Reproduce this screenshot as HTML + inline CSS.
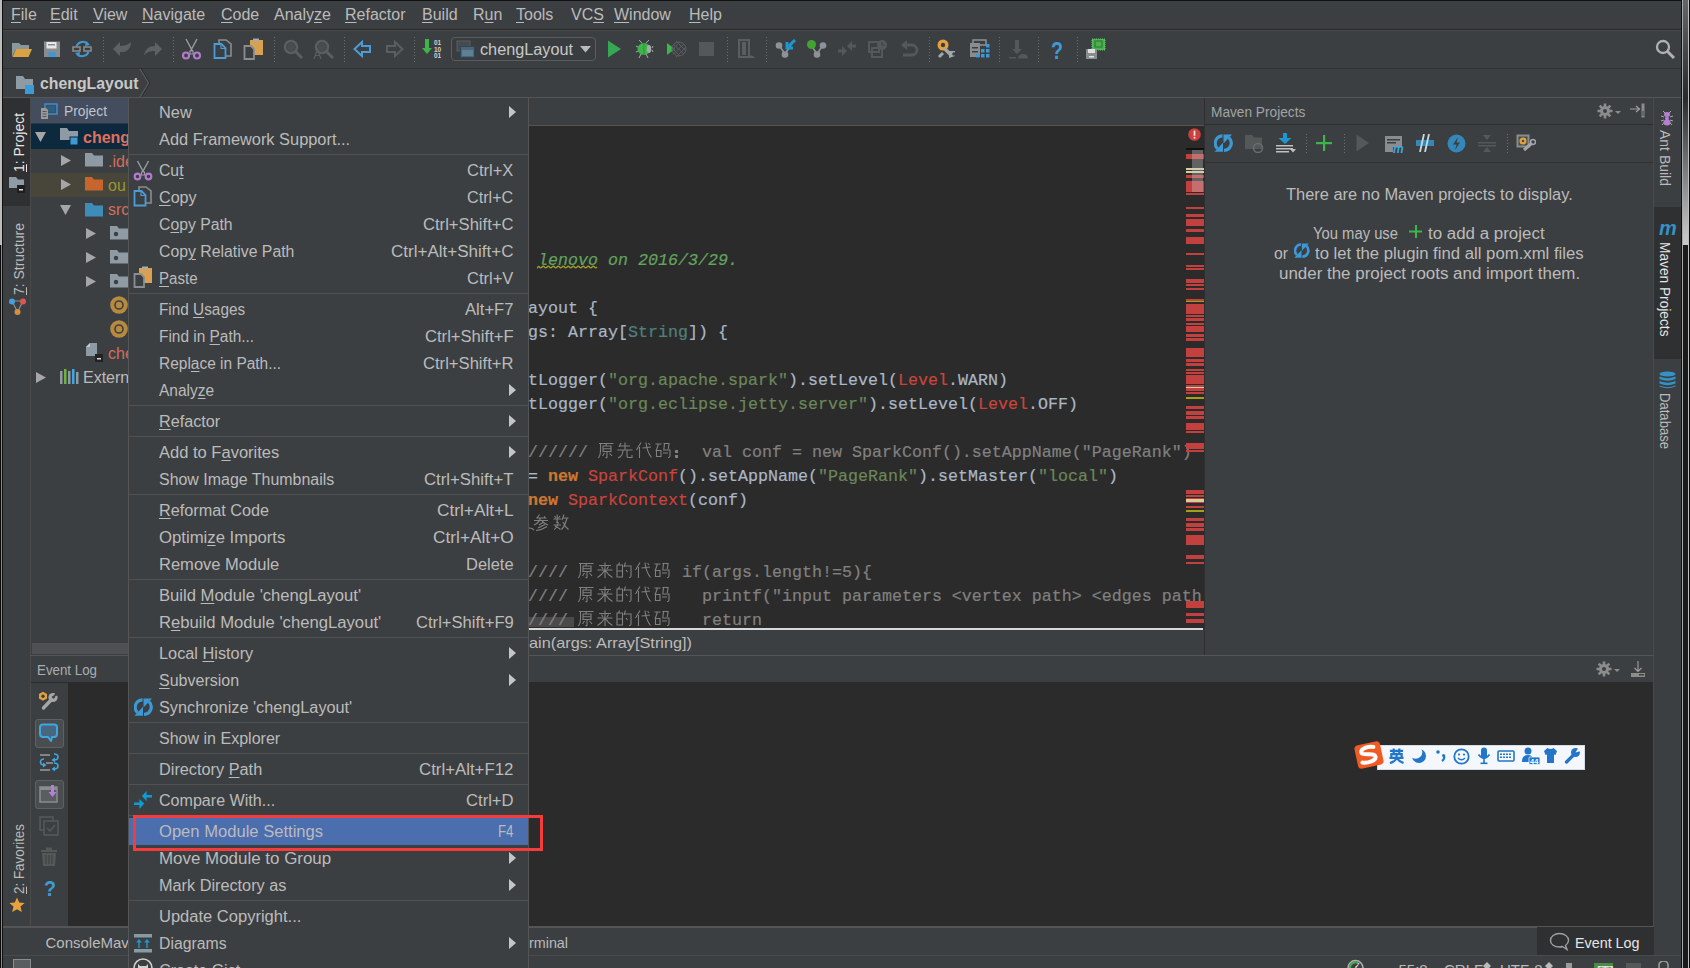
<!DOCTYPE html>
<html><head><meta charset="utf-8"><style>
html,body{margin:0;padding:0;}
body{width:1690px;height:968px;overflow:hidden;position:relative;background:#3C3F41;}
body>div,body>svg{position:absolute;box-sizing:content-box;}
.t{white-space:pre;}
.s{font-family:"Liberation Sans",sans-serif;}
.m{font-family:"Liberation Mono",monospace;-webkit-text-stroke:0.2px currentColor;}
u{text-decoration:underline;text-underline-offset:2px;}
</style></head><body>
<div style="left:0px;top:0px;width:1690px;height:968px;background:#3C3F41;"></div>
<div class="t s" style="left:11.00px;top:7.46px;font-size:16px;line-height:16px;color:#BBBBBB;font-weight:normal;font-style:normal;transform-origin:0 0;"><u>F</u>ile</div>
<div class="t s" style="left:50.00px;top:7.46px;font-size:16px;line-height:16px;color:#BBBBBB;font-weight:normal;font-style:normal;transform-origin:0 0;"><u>E</u>dit</div>
<div class="t s" style="left:93.00px;top:7.46px;font-size:16px;line-height:16px;color:#BBBBBB;font-weight:normal;font-style:normal;transform-origin:0 0;"><u>V</u>iew</div>
<div class="t s" style="left:142.00px;top:7.46px;font-size:16px;line-height:16px;color:#BBBBBB;font-weight:normal;font-style:normal;transform-origin:0 0;"><u>N</u>avigate</div>
<div class="t s" style="left:221.00px;top:7.46px;font-size:16px;line-height:16px;color:#BBBBBB;font-weight:normal;font-style:normal;transform-origin:0 0;"><u>C</u>ode</div>
<div class="t s" style="left:274.00px;top:7.46px;font-size:16px;line-height:16px;color:#BBBBBB;font-weight:normal;font-style:normal;transform-origin:0 0;">Analy<u>z</u>e</div>
<div class="t s" style="left:345.00px;top:7.46px;font-size:16px;line-height:16px;color:#BBBBBB;font-weight:normal;font-style:normal;transform-origin:0 0;"><u>R</u>efactor</div>
<div class="t s" style="left:422.00px;top:7.46px;font-size:16px;line-height:16px;color:#BBBBBB;font-weight:normal;font-style:normal;transform-origin:0 0;"><u>B</u>uild</div>
<div class="t s" style="left:473.00px;top:7.46px;font-size:16px;line-height:16px;color:#BBBBBB;font-weight:normal;font-style:normal;transform-origin:0 0;">R<u>u</u>n</div>
<div class="t s" style="left:516.00px;top:7.46px;font-size:16px;line-height:16px;color:#BBBBBB;font-weight:normal;font-style:normal;transform-origin:0 0;"><u>T</u>ools</div>
<div class="t s" style="left:571.00px;top:7.46px;font-size:16px;line-height:16px;color:#BBBBBB;font-weight:normal;font-style:normal;transform-origin:0 0;">VC<u>S</u></div>
<div class="t s" style="left:614.00px;top:7.46px;font-size:16px;line-height:16px;color:#BBBBBB;font-weight:normal;font-style:normal;transform-origin:0 0;"><u>W</u>indow</div>
<div class="t s" style="left:689.00px;top:7.46px;font-size:16px;line-height:16px;color:#BBBBBB;font-weight:normal;font-style:normal;transform-origin:0 0;"><u>H</u>elp</div>
<div style="left:0px;top:29px;width:1690px;height:1px;background:#2A2A2A;"></div>
<div style="left:0px;top:30px;width:1690px;height:1px;background:#4A4A4A;"></div>
<div style="left:0px;top:68px;width:1690px;height:1px;background:#323232;"></div>
<div style="left:0px;top:97px;width:1690px;height:1px;background:#555555;"></div>
<div style="left:30px;top:98px;width:1px;height:828px;background:#4A4A4A;"></div>
<div style="left:3px;top:98px;width:27px;height:108px;background:#2E3032;"></div>
<div style="left:31px;top:98px;width:97px;height:26px;background:#434D5E;"></div>
<div style="left:31px;top:123px;width:97px;height:1px;background:#2F3744;"></div>
<div style="left:31px;top:124px;width:97px;height:25px;background:#0D293E;"></div>
<div style="left:31px;top:173px;width:97px;height:24px;background:#48453A;"></div>
<div style="left:32px;top:643px;width:96px;height:11px;background:#4E5052;"></div>
<div style="left:528px;top:98px;width:676px;height:27px;background:#3C3F41;"></div>
<div style="left:528px;top:125px;width:676px;height:1px;background:#555555;"></div>
<div style="left:528px;top:126px;width:676px;height:503px;background:#2B2B2B;"></div>
<div style="left:528px;top:628px;width:675px;height:2px;background:#D8D8D8;"></div>
<div style="left:528px;top:630px;width:676px;height:25px;background:#3C3F41;"></div>
<div style="left:1204px;top:98px;width:1px;height:557px;background:#2F2F2F;"></div>
<div style="left:1205px;top:124px;width:448px;height:1px;background:#2D2D2D;"></div>
<div style="left:1205px;top:162px;width:448px;height:1px;background:#323232;"></div>
<div style="left:1653px;top:98px;width:1px;height:857px;background:#4A4A4A;"></div>
<div style="left:1654px;top:207px;width:27px;height:152px;background:#2E3032;"></div>
<div style="left:30px;top:655px;width:1623px;height:1px;background:#555555;"></div>
<div style="left:68px;top:682px;width:1585px;height:244px;background:#2B2B2B;"></div>
<div style="left:3px;top:926px;width:1651px;height:2px;background:#555555;"></div>
<div style="left:0px;top:955px;width:1690px;height:1px;background:#4A4A4A;"></div>
<div style="left:1537px;top:927px;width:117px;height:28px;background:#2E3032;"></div>
<div style="left:0px;top:0px;width:1690px;height:1px;background:#111111;"></div>
<div style="left:0px;top:0px;width:2px;height:245px;background:#BDBDBD;"></div>
<div style="left:0px;top:245px;width:1px;height:723px;background:#0A0A0A;"></div>
<div style="left:1px;top:245px;width:1px;height:723px;background:#8A8A8A;"></div>
<div style="left:2px;top:0px;width:1px;height:968px;background:#111111;"></div>
<div style="left:1681px;top:0px;width:1px;height:968px;background:#111111;"></div>
<div style="left:1682px;top:0px;width:1px;height:968px;background:#A8A8A8;"></div>
<div style="left:1683px;top:0px;width:5px;height:245px;background:#5F5F5F;background:linear-gradient(#666666 0%, #2A2A2A 40%, #C4C4C4 96%, #C8C8C8 100%);"></div>
<div style="left:1683px;top:245px;width:5px;height:723px;background:#1A1A1A;"></div>
<div style="left:1688px;top:0px;width:1px;height:968px;background:#C0C0C0;"></div>
<div style="left:1689px;top:0px;width:1px;height:968px;background:#0A0A0A;"></div>
<div class="t s" style="left:39.50px;top:76.46px;font-size:16px;line-height:16px;color:#C8C8C8;font-weight:bold;font-style:normal;transform:scaleX(0.9893);transform-origin:0 0;">chengLayout</div>
<svg style="left:139px;top:68px;" width="12" height="30" viewBox="0 0 12 30"><path d="M1 1 L9.5 15 L1 29" stroke="#5C5C5C" stroke-width="1.2" fill="none"/><path d="M2.5 1 L11 15 L2.5 29" stroke="#2E2E2E" stroke-width="1" fill="none"/></svg>
<svg style="left:15px;top:74px;" width="22" height="20" viewBox="0 0 22 20"><path d="M1 2 H8 L10 5 H18 V15 H1 Z" fill="#8E9BA4"/><rect x="10" y="11" width="9" height="9" fill="#3A9BD5"/></svg>
<div class="t s" style="left:11.50px;top:172.00px;font-size:14px;line-height:14px;color:#E6E6E6;font-weight:normal;transform-origin:0 0;transform:rotate(-90deg) scaleX(0.9976);"><u>1</u>: Project</div>
<div class="t s" style="left:11.50px;top:295.00px;font-size:14px;line-height:14px;color:#BBBBBB;font-weight:normal;transform-origin:0 0;transform:rotate(-90deg) scaleX(0.9949);"><u>7</u>: Structure</div>
<div class="t s" style="left:11.50px;top:893.50px;font-size:14px;line-height:14px;color:#BBBBBB;font-weight:normal;transform-origin:0 0;transform:rotate(-90deg) scaleX(0.9571);"><u>2</u>: Favorites</div>
<div class="t s" style="left:1672.00px;top:130.00px;font-size:14px;line-height:14px;color:#BBBBBB;font-weight:normal;transform-origin:0 0;transform:rotate(90deg) scaleX(0.9994);">Ant Build</div>
<div class="t s" style="left:1672.00px;top:241.50px;font-size:14px;line-height:14px;color:#E6E6E6;font-weight:normal;transform-origin:0 0;transform:rotate(90deg) scaleX(0.9794);">Maven Projects</div>
<div class="t s" style="left:1672.00px;top:393.00px;font-size:14px;line-height:14px;color:#BBBBBB;font-weight:normal;transform-origin:0 0;transform:rotate(90deg) scaleX(0.9344);">Database</div>
<div class="t s" style="left:64.00px;top:104.15px;font-size:14px;line-height:14px;color:#C0C4CC;font-weight:normal;font-style:normal;transform:scaleX(0.9868);transform-origin:0 0;">Project</div>
<div class="t s" style="left:83.00px;top:130.46px;font-size:16px;line-height:16px;color:#E0705E;font-weight:bold;font-style:normal;transform-origin:0 0;">cheng</div>
<div class="t s" style="left:108.00px;top:154.46px;font-size:16px;line-height:16px;color:#D46D5E;font-weight:normal;font-style:normal;transform-origin:0 0;">.ide</div>
<div class="t s" style="left:108.00px;top:178.46px;font-size:16px;line-height:16px;color:#949B30;font-weight:normal;font-style:normal;transform-origin:0 0;">ou</div>
<div class="t s" style="left:108.00px;top:202.46px;font-size:16px;line-height:16px;color:#D46D5E;font-weight:normal;font-style:normal;transform-origin:0 0;">src</div>
<div class="t s" style="left:108.00px;top:346.46px;font-size:16px;line-height:16px;color:#D46D5E;font-weight:normal;font-style:normal;transform-origin:0 0;">che</div>
<div class="t s" style="left:83.00px;top:370.46px;font-size:16px;line-height:16px;color:#BBBBBB;font-weight:normal;font-style:normal;transform-origin:0 0;">Extern</div>
<div class="t s" style="left:529.00px;top:635.30px;font-size:15px;line-height:15px;color:#BBBBBB;font-weight:normal;font-style:normal;transform:scaleX(1.0863);transform-origin:0 0;">ain(args: Array[String])</div>
<div class="t s" style="left:36.50px;top:662.65px;font-size:14px;line-height:14px;color:#A9ADB1;font-weight:normal;font-style:normal;transform:scaleX(0.9516);transform-origin:0 0;">Event Log</div>
<div class="t s" style="left:45.50px;top:935.30px;font-size:15px;line-height:15px;color:#BBBBBB;font-weight:normal;font-style:normal;transform-origin:0 0;">ConsoleMaven</div>
<div class="t s" style="left:529.00px;top:935.30px;font-size:15px;line-height:15px;color:#BBBBBB;font-weight:normal;font-style:normal;transform:scaleX(0.9549);transform-origin:0 0;">rminal</div>
<div class="t s" style="left:1574.50px;top:935.30px;font-size:15px;line-height:15px;color:#E6E6E6;font-weight:normal;font-style:normal;transform:scaleX(0.9548);transform-origin:0 0;">Event Log</div>
<div class="t s" style="left:1285.80px;top:186.96px;font-size:16px;line-height:16px;color:#BBBBBB;font-weight:normal;font-style:normal;transform:scaleX(1.0245);transform-origin:0 0;">There are no Maven projects to display.</div>
<div class="t s" style="left:1313.00px;top:226.46px;font-size:16px;line-height:16px;color:#BBBBBB;font-weight:normal;font-style:normal;transform:scaleX(0.9248);transform-origin:0 0;">You may use</div>
<div class="t s" style="left:1428.40px;top:226.46px;font-size:16px;line-height:16px;color:#BBBBBB;font-weight:normal;font-style:normal;transform:scaleX(1.0571);transform-origin:0 0;">to add a project</div>
<div class="t s" style="left:1274.00px;top:246.46px;font-size:16px;line-height:16px;color:#BBBBBB;font-weight:normal;font-style:normal;transform:scaleX(0.9840);transform-origin:0 0;">or</div>
<div class="t s" style="left:1314.70px;top:246.46px;font-size:16px;line-height:16px;color:#BBBBBB;font-weight:normal;font-style:normal;transform:scaleX(1.0454);transform-origin:0 0;">to let the plugin find all pom.xml files</div>
<div class="t s" style="left:1278.50px;top:266.46px;font-size:16px;line-height:16px;color:#BBBBBB;font-weight:normal;font-style:normal;transform:scaleX(1.0580);transform-origin:0 0;">under the project roots and import them.</div>
<div class="t s" style="left:1210.50px;top:105.15px;font-size:14px;line-height:14px;color:#A0A4A8;font-weight:normal;font-style:normal;transform:scaleX(0.9774);transform-origin:0 0;">Maven Projects</div>
<div style="left:528px;top:617px;width:46px;height:10px;background:#4A4A4A;"></div>
<div class="t m" style="left:538.00px;top:253.22px;font-size:16.667px;line-height:16.667px;color:#62A35F;font-weight:normal;font-style:italic;transform-origin:0 0;">lenovo on 2016/3/29.</div>
<svg style="left:537px;top:265px;" width="61" height="5" viewBox="0 0 61 5"><path d="M0 3.5 Q1.25 0.5 2.50 2 T5.00 2 Q6.25 0.5 7.50 2 T10.00 2 Q11.25 0.5 12.50 2 T15.00 2 Q16.25 0.5 17.50 2 T20.00 2 Q21.25 0.5 22.50 2 T25.00 2 Q26.25 0.5 27.50 2 T30.00 2 Q31.25 0.5 32.50 2 T35.00 2 Q36.25 0.5 37.50 2 T40.00 2 Q41.25 0.5 42.50 2 T45.00 2 Q46.25 0.5 47.50 2 T50.00 2 Q51.25 0.5 52.50 2 T55.00 2 Q56.25 0.5 57.50 2 T60.00 2" stroke="#9E9B28" stroke-width="1.3" fill="none"/></svg>
<div class="t m" style="left:528.00px;top:301.22px;font-size:16.667px;line-height:16.667px;color:#A9B7C6;font-weight:normal;font-style:normal;transform-origin:0 0;">ayout {</div>
<div class="t m" style="left:528.00px;top:325.22px;font-size:16.667px;line-height:16.667px;color:#A9B7C6;font-weight:normal;font-style:normal;transform-origin:0 0;">gs: Array[</div>
<div class="t m" style="left:628.00px;top:325.22px;font-size:16.667px;line-height:16.667px;color:#4E807D;font-weight:normal;font-style:normal;transform-origin:0 0;">String</div>
<div class="t m" style="left:688.00px;top:325.22px;font-size:16.667px;line-height:16.667px;color:#A9B7C6;font-weight:normal;font-style:normal;transform-origin:0 0;">]) {</div>
<div class="t m" style="left:528.00px;top:373.22px;font-size:16.667px;line-height:16.667px;color:#A9B7C6;font-weight:normal;font-style:normal;transform-origin:0 0;">tLogger(</div>
<div class="t m" style="left:608.00px;top:373.22px;font-size:16.667px;line-height:16.667px;color:#6A8759;font-weight:normal;font-style:normal;transform-origin:0 0;">&quot;org.apache.spark&quot;</div>
<div class="t m" style="left:788.00px;top:373.22px;font-size:16.667px;line-height:16.667px;color:#A9B7C6;font-weight:normal;font-style:normal;transform-origin:0 0;">).setLevel(</div>
<div class="t m" style="left:898.00px;top:373.22px;font-size:16.667px;line-height:16.667px;color:#C9443C;font-weight:normal;font-style:normal;transform-origin:0 0;">Level</div>
<div class="t m" style="left:948.00px;top:373.22px;font-size:16.667px;line-height:16.667px;color:#A9B7C6;font-weight:normal;font-style:normal;transform-origin:0 0;">.WARN)</div>
<div class="t m" style="left:528.00px;top:397.22px;font-size:16.667px;line-height:16.667px;color:#A9B7C6;font-weight:normal;font-style:normal;transform-origin:0 0;">tLogger(</div>
<div class="t m" style="left:608.00px;top:397.22px;font-size:16.667px;line-height:16.667px;color:#6A8759;font-weight:normal;font-style:normal;transform-origin:0 0;">&quot;org.eclipse.jetty.server&quot;</div>
<div class="t m" style="left:868.00px;top:397.22px;font-size:16.667px;line-height:16.667px;color:#A9B7C6;font-weight:normal;font-style:normal;transform-origin:0 0;">).setLevel(</div>
<div class="t m" style="left:978.00px;top:397.22px;font-size:16.667px;line-height:16.667px;color:#C9443C;font-weight:normal;font-style:normal;transform-origin:0 0;">Level</div>
<div class="t m" style="left:1028.00px;top:397.22px;font-size:16.667px;line-height:16.667px;color:#A9B7C6;font-weight:normal;font-style:normal;transform-origin:0 0;">.OFF)</div>
<div class="t m" style="left:528.00px;top:445.22px;font-size:16.667px;line-height:16.667px;color:#808080;font-weight:normal;font-style:normal;transform-origin:0 0;">////// </div>
<div class="t m" style="left:682.00px;top:445.22px;font-size:16.667px;line-height:16.667px;color:#808080;font-weight:normal;font-style:normal;transform-origin:0 0;">  val conf = new SparkConf().setAppName(&quot;PageRank&quot;)</div>
<div class="t m" style="left:528.00px;top:469.22px;font-size:16.667px;line-height:16.667px;color:#A9B7C6;font-weight:normal;font-style:normal;transform-origin:0 0;">= </div>
<div class="t m" style="left:548.00px;top:469.22px;font-size:16.667px;line-height:16.667px;color:#CC7832;font-weight:bold;font-style:normal;transform-origin:0 0;">new </div>
<div class="t m" style="left:588.00px;top:469.22px;font-size:16.667px;line-height:16.667px;color:#C9443C;font-weight:normal;font-style:normal;transform-origin:0 0;">SparkConf</div>
<div class="t m" style="left:678.00px;top:469.22px;font-size:16.667px;line-height:16.667px;color:#A9B7C6;font-weight:normal;font-style:normal;transform-origin:0 0;">().setAppName(</div>
<div class="t m" style="left:818.00px;top:469.22px;font-size:16.667px;line-height:16.667px;color:#6A8759;font-weight:normal;font-style:normal;transform-origin:0 0;">&quot;PageRank&quot;</div>
<div class="t m" style="left:918.00px;top:469.22px;font-size:16.667px;line-height:16.667px;color:#A9B7C6;font-weight:normal;font-style:normal;transform-origin:0 0;">).setMaster(</div>
<div class="t m" style="left:1038.00px;top:469.22px;font-size:16.667px;line-height:16.667px;color:#6A8759;font-weight:normal;font-style:normal;transform-origin:0 0;">&quot;local&quot;</div>
<div class="t m" style="left:1108.00px;top:469.22px;font-size:16.667px;line-height:16.667px;color:#A9B7C6;font-weight:normal;font-style:normal;transform-origin:0 0;">)</div>
<div class="t m" style="left:528.00px;top:493.22px;font-size:16.667px;line-height:16.667px;color:#CC7832;font-weight:bold;font-style:normal;transform-origin:0 0;">new </div>
<div class="t m" style="left:568.00px;top:493.22px;font-size:16.667px;line-height:16.667px;color:#C9443C;font-weight:normal;font-style:normal;transform-origin:0 0;">SparkContext</div>
<div class="t m" style="left:688.00px;top:493.22px;font-size:16.667px;line-height:16.667px;color:#A9B7C6;font-weight:normal;font-style:normal;transform-origin:0 0;">(conf)</div>
<div class="t m" style="left:528.00px;top:565.22px;font-size:16.667px;line-height:16.667px;color:#808080;font-weight:normal;font-style:normal;transform-origin:0 0;">//// </div>
<div class="t m" style="left:672.00px;top:565.22px;font-size:16.667px;line-height:16.667px;color:#808080;font-weight:normal;font-style:normal;transform-origin:0 0;"> if(args.length!=5){</div>
<div class="t m" style="left:528.00px;top:589.22px;font-size:16.667px;line-height:16.667px;color:#808080;font-weight:normal;font-style:normal;transform-origin:0 0;">//// </div>
<div class="t m" style="left:672.00px;top:589.22px;font-size:16.667px;line-height:16.667px;color:#808080;font-weight:normal;font-style:normal;transform-origin:0 0;">   printf(&quot;input parameters &lt;vertex path&gt; &lt;edges path</div>
<div class="t m" style="left:528.00px;top:613.22px;font-size:16.667px;line-height:16.667px;color:#808080;font-weight:normal;font-style:normal;transform-origin:0 0;">//// </div>
<div class="t m" style="left:672.00px;top:613.22px;font-size:16.667px;line-height:16.667px;color:#808080;font-weight:normal;font-style:normal;transform-origin:0 0;">   return</div>
<div style="left:1186px;top:154px;width:18px;height:5px;background:#C2403D;"></div>
<div style="left:1186px;top:168px;width:18px;height:2px;background:#D4CFA0;"></div>
<div style="left:1186px;top:171px;width:18px;height:2px;background:#D4CFA0;"></div>
<div style="left:1186px;top:175px;width:18px;height:3px;background:#C2403D;"></div>
<div style="left:1186px;top:181px;width:18px;height:11px;background:#C2403D;"></div>
<div style="left:1186px;top:193px;width:18px;height:2px;background:#C2403D;"></div>
<div style="left:1186px;top:207px;width:18px;height:2px;background:#C2403D;"></div>
<div style="left:1186px;top:214px;width:18px;height:3px;background:#C2403D;"></div>
<div style="left:1186px;top:219px;width:18px;height:7px;background:#C2403D;"></div>
<div style="left:1186px;top:229px;width:18px;height:3px;background:#C2403D;"></div>
<div style="left:1186px;top:237px;width:18px;height:7px;background:#C2403D;"></div>
<div style="left:1186px;top:253px;width:18px;height:2px;background:#C2403D;"></div>
<div style="left:1186px;top:265px;width:18px;height:2px;background:#C2403D;"></div>
<div style="left:1186px;top:268px;width:18px;height:2px;background:#C2403D;"></div>
<div style="left:1186px;top:279px;width:18px;height:4px;background:#C2403D;"></div>
<div style="left:1186px;top:284px;width:18px;height:2px;background:#C2403D;"></div>
<div style="left:1186px;top:288px;width:18px;height:2px;background:#C2403D;"></div>
<div style="left:1186px;top:299px;width:18px;height:2px;background:#C2403D;"></div>
<div style="left:1186px;top:301px;width:18px;height:1px;background:#A2A114;"></div>
<div style="left:1186px;top:304px;width:18px;height:10px;background:#C2403D;"></div>
<div style="left:1186px;top:315px;width:18px;height:2px;background:#C2403D;"></div>
<div style="left:1186px;top:318px;width:18px;height:3px;background:#C2403D;"></div>
<div style="left:1186px;top:323px;width:18px;height:2px;background:#C2403D;"></div>
<div style="left:1186px;top:326px;width:18px;height:6px;background:#C2403D;"></div>
<div style="left:1186px;top:334px;width:18px;height:3px;background:#C2403D;"></div>
<div style="left:1186px;top:338px;width:18px;height:3px;background:#C2403D;"></div>
<div style="left:1186px;top:348px;width:18px;height:9px;background:#C2403D;"></div>
<div style="left:1186px;top:359px;width:18px;height:3px;background:#C2403D;"></div>
<div style="left:1186px;top:363px;width:18px;height:3px;background:#C2403D;"></div>
<div style="left:1186px;top:369px;width:18px;height:2px;background:#C2403D;"></div>
<div style="left:1186px;top:372px;width:18px;height:2px;background:#C2403D;"></div>
<div style="left:1186px;top:375px;width:18px;height:9px;background:#C2403D;"></div>
<div style="left:1186px;top:385px;width:18px;height:2px;background:#C2403D;"></div>
<div style="left:1186px;top:387px;width:18px;height:1px;background:#D4CFA0;"></div>
<div style="left:1186px;top:388px;width:18px;height:3px;background:#C2403D;"></div>
<div style="left:1186px;top:392px;width:18px;height:2px;background:#C2403D;"></div>
<div style="left:1186px;top:397px;width:18px;height:2px;background:#A2A114;"></div>
<div style="left:1186px;top:406px;width:18px;height:3px;background:#C2403D;"></div>
<div style="left:1186px;top:411px;width:18px;height:4px;background:#C2403D;"></div>
<div style="left:1186px;top:416px;width:18px;height:3px;background:#C2403D;"></div>
<div style="left:1186px;top:423px;width:18px;height:7px;background:#C2403D;"></div>
<div style="left:1186px;top:431px;width:18px;height:2px;background:#C2403D;"></div>
<div style="left:1186px;top:443px;width:18px;height:6px;background:#C2403D;"></div>
<div style="left:1186px;top:450px;width:18px;height:2px;background:#C2403D;"></div>
<div style="left:1186px;top:490px;width:18px;height:4px;background:#C2403D;"></div>
<div style="left:1186px;top:495px;width:18px;height:2px;background:#C2403D;"></div>
<div style="left:1186px;top:498px;width:18px;height:1px;background:#C2403D;"></div>
<div style="left:1186px;top:499px;width:18px;height:3px;background:#D4CFA0;"></div>
<div style="left:1186px;top:502px;width:18px;height:1px;background:#C2403D;"></div>
<div style="left:1186px;top:506px;width:18px;height:2px;background:#C2403D;"></div>
<div style="left:1186px;top:510px;width:18px;height:2px;background:#A2A114;"></div>
<div style="left:1186px;top:518px;width:18px;height:3px;background:#C2403D;"></div>
<div style="left:1186px;top:523px;width:18px;height:4px;background:#C2403D;"></div>
<div style="left:1186px;top:528px;width:18px;height:3px;background:#C2403D;"></div>
<div style="left:1186px;top:535px;width:18px;height:10px;background:#C2403D;"></div>
<div style="left:1186px;top:555px;width:18px;height:4px;background:#C2403D;"></div>
<div style="left:1186px;top:562px;width:18px;height:2px;background:#C2403D;"></div>
<div style="left:1186px;top:601px;width:18px;height:7px;background:#C2403D;"></div>
<div style="left:1186px;top:613px;width:18px;height:3px;background:#C2403D;"></div>
<div style="left:1186px;top:619px;width:18px;height:4px;background:#C2403D;"></div>
<div style="left:1186px;top:148px;width:18px;height:2px;background:#111111;"></div>
<div style="left:1192px;top:150px;width:11px;height:42px;background:rgba(200,200,200,0.35);"></div>
<svg style="left:1188px;top:128px;" width="13" height="13" viewBox="0 0 13 13"><circle cx="6.5" cy="6.5" r="6.3" fill="#C9403D"/><rect x="5.6" y="2.6" width="1.8" height="5.2" fill="#F0E0E0"/><rect x="5.6" y="8.8" width="1.8" height="1.8" fill="#F0E0E0"/></svg>
<svg style="left:103px;top:37px;" width="1" height="25" viewBox="0 0 1 25"><rect x="0" y="0" width="1" height="1" fill="#6E6E6E"/><rect x="0" y="3" width="1" height="1" fill="#6E6E6E"/><rect x="0" y="6" width="1" height="1" fill="#6E6E6E"/><rect x="0" y="9" width="1" height="1" fill="#6E6E6E"/><rect x="0" y="12" width="1" height="1" fill="#6E6E6E"/><rect x="0" y="15" width="1" height="1" fill="#6E6E6E"/><rect x="0" y="18" width="1" height="1" fill="#6E6E6E"/><rect x="0" y="21" width="1" height="1" fill="#6E6E6E"/><rect x="0" y="24" width="1" height="1" fill="#6E6E6E"/></svg>
<svg style="left:173px;top:37px;" width="1" height="25" viewBox="0 0 1 25"><rect x="0" y="0" width="1" height="1" fill="#6E6E6E"/><rect x="0" y="3" width="1" height="1" fill="#6E6E6E"/><rect x="0" y="6" width="1" height="1" fill="#6E6E6E"/><rect x="0" y="9" width="1" height="1" fill="#6E6E6E"/><rect x="0" y="12" width="1" height="1" fill="#6E6E6E"/><rect x="0" y="15" width="1" height="1" fill="#6E6E6E"/><rect x="0" y="18" width="1" height="1" fill="#6E6E6E"/><rect x="0" y="21" width="1" height="1" fill="#6E6E6E"/><rect x="0" y="24" width="1" height="1" fill="#6E6E6E"/></svg>
<svg style="left:274px;top:37px;" width="1" height="25" viewBox="0 0 1 25"><rect x="0" y="0" width="1" height="1" fill="#6E6E6E"/><rect x="0" y="3" width="1" height="1" fill="#6E6E6E"/><rect x="0" y="6" width="1" height="1" fill="#6E6E6E"/><rect x="0" y="9" width="1" height="1" fill="#6E6E6E"/><rect x="0" y="12" width="1" height="1" fill="#6E6E6E"/><rect x="0" y="15" width="1" height="1" fill="#6E6E6E"/><rect x="0" y="18" width="1" height="1" fill="#6E6E6E"/><rect x="0" y="21" width="1" height="1" fill="#6E6E6E"/><rect x="0" y="24" width="1" height="1" fill="#6E6E6E"/></svg>
<svg style="left:344px;top:37px;" width="1" height="25" viewBox="0 0 1 25"><rect x="0" y="0" width="1" height="1" fill="#6E6E6E"/><rect x="0" y="3" width="1" height="1" fill="#6E6E6E"/><rect x="0" y="6" width="1" height="1" fill="#6E6E6E"/><rect x="0" y="9" width="1" height="1" fill="#6E6E6E"/><rect x="0" y="12" width="1" height="1" fill="#6E6E6E"/><rect x="0" y="15" width="1" height="1" fill="#6E6E6E"/><rect x="0" y="18" width="1" height="1" fill="#6E6E6E"/><rect x="0" y="21" width="1" height="1" fill="#6E6E6E"/><rect x="0" y="24" width="1" height="1" fill="#6E6E6E"/></svg>
<svg style="left:414px;top:37px;" width="1" height="25" viewBox="0 0 1 25"><rect x="0" y="0" width="1" height="1" fill="#6E6E6E"/><rect x="0" y="3" width="1" height="1" fill="#6E6E6E"/><rect x="0" y="6" width="1" height="1" fill="#6E6E6E"/><rect x="0" y="9" width="1" height="1" fill="#6E6E6E"/><rect x="0" y="12" width="1" height="1" fill="#6E6E6E"/><rect x="0" y="15" width="1" height="1" fill="#6E6E6E"/><rect x="0" y="18" width="1" height="1" fill="#6E6E6E"/><rect x="0" y="21" width="1" height="1" fill="#6E6E6E"/><rect x="0" y="24" width="1" height="1" fill="#6E6E6E"/></svg>
<svg style="left:727px;top:37px;" width="1" height="25" viewBox="0 0 1 25"><rect x="0" y="0" width="1" height="1" fill="#6E6E6E"/><rect x="0" y="3" width="1" height="1" fill="#6E6E6E"/><rect x="0" y="6" width="1" height="1" fill="#6E6E6E"/><rect x="0" y="9" width="1" height="1" fill="#6E6E6E"/><rect x="0" y="12" width="1" height="1" fill="#6E6E6E"/><rect x="0" y="15" width="1" height="1" fill="#6E6E6E"/><rect x="0" y="18" width="1" height="1" fill="#6E6E6E"/><rect x="0" y="21" width="1" height="1" fill="#6E6E6E"/><rect x="0" y="24" width="1" height="1" fill="#6E6E6E"/></svg>
<svg style="left:766px;top:37px;" width="1" height="25" viewBox="0 0 1 25"><rect x="0" y="0" width="1" height="1" fill="#6E6E6E"/><rect x="0" y="3" width="1" height="1" fill="#6E6E6E"/><rect x="0" y="6" width="1" height="1" fill="#6E6E6E"/><rect x="0" y="9" width="1" height="1" fill="#6E6E6E"/><rect x="0" y="12" width="1" height="1" fill="#6E6E6E"/><rect x="0" y="15" width="1" height="1" fill="#6E6E6E"/><rect x="0" y="18" width="1" height="1" fill="#6E6E6E"/><rect x="0" y="21" width="1" height="1" fill="#6E6E6E"/><rect x="0" y="24" width="1" height="1" fill="#6E6E6E"/></svg>
<svg style="left:929px;top:37px;" width="1" height="25" viewBox="0 0 1 25"><rect x="0" y="0" width="1" height="1" fill="#6E6E6E"/><rect x="0" y="3" width="1" height="1" fill="#6E6E6E"/><rect x="0" y="6" width="1" height="1" fill="#6E6E6E"/><rect x="0" y="9" width="1" height="1" fill="#6E6E6E"/><rect x="0" y="12" width="1" height="1" fill="#6E6E6E"/><rect x="0" y="15" width="1" height="1" fill="#6E6E6E"/><rect x="0" y="18" width="1" height="1" fill="#6E6E6E"/><rect x="0" y="21" width="1" height="1" fill="#6E6E6E"/><rect x="0" y="24" width="1" height="1" fill="#6E6E6E"/></svg>
<svg style="left:999px;top:37px;" width="1" height="25" viewBox="0 0 1 25"><rect x="0" y="0" width="1" height="1" fill="#6E6E6E"/><rect x="0" y="3" width="1" height="1" fill="#6E6E6E"/><rect x="0" y="6" width="1" height="1" fill="#6E6E6E"/><rect x="0" y="9" width="1" height="1" fill="#6E6E6E"/><rect x="0" y="12" width="1" height="1" fill="#6E6E6E"/><rect x="0" y="15" width="1" height="1" fill="#6E6E6E"/><rect x="0" y="18" width="1" height="1" fill="#6E6E6E"/><rect x="0" y="21" width="1" height="1" fill="#6E6E6E"/><rect x="0" y="24" width="1" height="1" fill="#6E6E6E"/></svg>
<svg style="left:1038px;top:37px;" width="1" height="25" viewBox="0 0 1 25"><rect x="0" y="0" width="1" height="1" fill="#6E6E6E"/><rect x="0" y="3" width="1" height="1" fill="#6E6E6E"/><rect x="0" y="6" width="1" height="1" fill="#6E6E6E"/><rect x="0" y="9" width="1" height="1" fill="#6E6E6E"/><rect x="0" y="12" width="1" height="1" fill="#6E6E6E"/><rect x="0" y="15" width="1" height="1" fill="#6E6E6E"/><rect x="0" y="18" width="1" height="1" fill="#6E6E6E"/><rect x="0" y="21" width="1" height="1" fill="#6E6E6E"/><rect x="0" y="24" width="1" height="1" fill="#6E6E6E"/></svg>
<svg style="left:1077px;top:37px;" width="1" height="25" viewBox="0 0 1 25"><rect x="0" y="0" width="1" height="1" fill="#6E6E6E"/><rect x="0" y="3" width="1" height="1" fill="#6E6E6E"/><rect x="0" y="6" width="1" height="1" fill="#6E6E6E"/><rect x="0" y="9" width="1" height="1" fill="#6E6E6E"/><rect x="0" y="12" width="1" height="1" fill="#6E6E6E"/><rect x="0" y="15" width="1" height="1" fill="#6E6E6E"/><rect x="0" y="18" width="1" height="1" fill="#6E6E6E"/><rect x="0" y="21" width="1" height="1" fill="#6E6E6E"/><rect x="0" y="24" width="1" height="1" fill="#6E6E6E"/></svg>
<svg style="left:11px;top:40px;" width="22" height="18" viewBox="0 0 22 18"><path d="M1 3 H8 L10 5 H18 V9 H5 L1 17 Z" fill="#8A979F"/><path d="M1.5 17 L5 9 H21 L17.5 17 Z" fill="#D9A343"/></svg>
<svg style="left:43px;top:41px;" width="18" height="17" viewBox="0 0 18 17"><path d="M1 0.5 H17 V16 H1 Z" fill="#8A8D8F"/><rect x="3.5" y="1" width="10" height="6.5" fill="#E8E8E8"/><rect x="5" y="3" width="7" height="1.5" fill="#8A8D8F"/><rect x="5.5" y="11" width="7" height="5" fill="#3D98D3"/></svg>
<svg style="left:72px;top:39px;" width="21" height="20" viewBox="0 0 21 20"><path d="M4.5 7 A7 7 0 0 1 16 5" stroke="#3D98D3" stroke-width="2" fill="none"/><path d="M14 2 L18 6 L13 7 Z" fill="#3D98D3"/><path d="M16.5 13 A7 7 0 0 1 5 15" stroke="#3D98D3" stroke-width="2" fill="none"/><path d="M7 18 L3 14 L8 13 Z" fill="#3D98D3"/><rect x="1" y="8" width="7" height="4" fill="none" stroke="#8A8D8F" stroke-width="1.5"/><rect x="12" y="8" width="7" height="4" fill="none" stroke="#8A8D8F" stroke-width="1.5"/></svg>
<svg style="left:112px;top:40px;" width="21" height="18" viewBox="0 0 21 18"><path d="M1 9 L8 2 V6 C14 6 18 3 19 2 C19 9 14 13 8 12 V16 Z" fill="#5E6163"/></svg>
<svg style="left:142px;top:40px;" width="21" height="18" viewBox="0 0 21 18"><path d="M20 9 L13 2 V6 C7 6 3 9 2 16 C4 12 8 11 13 11 V16 Z" fill="#5E6163"/></svg>
<svg style="left:181px;top:38px;" width="21" height="22" viewBox="0 0 21 22"><path d="M5 1 L12 14 M16 1 L9 14" stroke="#9A9EA1" stroke-width="1.4" fill="none"/><rect x="9" y="13" width="3" height="3" fill="#3C3F41" stroke="#9A9EA1" stroke-width="1"/><circle cx="5" cy="17.5" r="3" fill="none" stroke="#B07ACD" stroke-width="2.2"/><circle cx="16" cy="17.5" r="3" fill="none" stroke="#B07ACD" stroke-width="2.2"/></svg>
<svg style="left:213px;top:39px;" width="21" height="20" viewBox="0 0 21 20"><path d="M6 1 H13 L18 5 V17 H6 Z" fill="none" stroke="#8A8D8F" stroke-width="1.6"/><path d="M1.5 5 H8.5 L12.5 9 V19 H1.5 Z" fill="#3C3F41" stroke="#4A9CD6" stroke-width="1.8"/><path d="M8 5 V9.5 H12.5" fill="none" stroke="#4A9CD6" stroke-width="1.2"/></svg>
<svg style="left:243px;top:38px;" width="22" height="22" viewBox="0 0 22 22"><rect x="7" y="2" width="13" height="15" fill="#D9A050"/><rect x="10" y="0.5" width="6" height="3" fill="#AAAAAA"/><path d="M1.5 8 H8 L11 11 V21 H1.5 Z" fill="#3C3F41" stroke="#8A8D8F" stroke-width="1.8"/></svg>
<svg style="left:283px;top:39px;" width="21" height="20" viewBox="0 0 21 20"><circle cx="8" cy="8" r="6" fill="none" stroke="#5B5E60" stroke-width="2.5"/><circle cx="8" cy="8" r="4" fill="#4A4D4F"/><path d="M12 12 L19 19" stroke="#5B5E60" stroke-width="3"/></svg>
<svg style="left:313px;top:39px;" width="21" height="21" viewBox="0 0 21 21"><circle cx="9" cy="8" r="6" fill="none" stroke="#5B5E60" stroke-width="2.5"/><circle cx="9" cy="8" r="4" fill="#4A4D4F"/><path d="M13 12 L20 19" stroke="#5B5E60" stroke-width="3"/><path d="M1 20 L4.5 10 L8 20 M2.3 16.5 H6.7" stroke="#5B5E60" stroke-width="1.2" fill="none"/></svg>
<svg style="left:353px;top:40px;" width="19" height="18" viewBox="0 0 19 18"><path d="M1.5 9 L9 2 V6 H17 V12 H9 V16 Z" fill="none" stroke="#4A9CD6" stroke-width="2"/></svg>
<svg style="left:385px;top:40px;" width="19" height="18" viewBox="0 0 19 18"><path d="M17.5 9 L10 2 V6 H2 V12 H10 V16 Z" fill="none" stroke="#5B5E60" stroke-width="2"/></svg>
<svg style="left:422px;top:39px;" width="22" height="20" viewBox="0 0 22 20"><rect x="3" y="0" width="4" height="10" fill="#3CB54A"/><path d="M0 9 H10 L5 15 Z" fill="#3CB54A"/><text x="12" y="6" font-family="Liberation Sans" font-size="6.5" fill="#D0D0D0" font-weight="bold">01</text><text x="12" y="12.5" font-family="Liberation Sans" font-size="6.5" fill="#D0D0D0" font-weight="bold">10</text><text x="12" y="19" font-family="Liberation Sans" font-size="6.5" fill="#D0D0D0" font-weight="bold">01</text></svg>
<div style="left:451px;top:37px;width:143px;height:22px;border:1px solid #5A5D5F;border-radius:4px;background:#3A3D3F;"></div>
<svg style="left:456px;top:40px;" width="20" height="18" viewBox="0 0 20 18"><rect x="1" y="1" width="13" height="10" fill="#474A4C" stroke="#5A5D5F"/><rect x="4.5" y="6.5" width="14" height="11" fill="#4A6678" stroke="#2F4656"/><rect x="6" y="10" width="11" height="6" fill="#5E7F94"/></svg>
<div class="t s" style="left:479.50px;top:41.96px;font-size:16px;line-height:16px;color:#C8C8C8;font-weight:normal;font-style:normal;transform:scaleX(1.0149);transform-origin:0 0;">chengLayout</div>
<svg style="left:580px;top:46px;" width="11" height="7" viewBox="0 0 11 7"><path d="M0 0 H11 L5.5 6.5 Z" fill="#BBBBBB"/></svg>
<svg style="left:607px;top:40px;" width="15" height="18" viewBox="0 0 15 18"><path d="M1 0.5 L14 9 L1 17.5 Z" fill="#34A853"/></svg>
<svg style="left:635px;top:39px;" width="20" height="20" viewBox="0 0 20 20"><ellipse cx="9" cy="10" rx="6.5" ry="6" fill="#3CB54A"/><path d="M9 4 V16" stroke="#2E8B3A" stroke-width="0.8"/><ellipse cx="14" cy="10" rx="2.2" ry="4" fill="#AAAAAA"/><path d="M4 1 L7 4 M14 1 L11 4 M1 7 L3 8 M1 13 L3 12 M4 19 L6 15 M13 19 L11 15 M18 7 L17 9 M18 13 L17 11" stroke="#AAAAAA" stroke-width="1"/></svg>
<svg style="left:666px;top:39px;" width="21" height="20" viewBox="0 0 21 20"><path d="M1 4 L9 10 L1 16 Z" fill="#3CB54A"/><circle cx="13" cy="10" r="7" fill="none" stroke="#5B5E60" stroke-width="1"/><path d="M7 5 L18 15 M7 15 L18 5 M10 2 L20 12 M10 18 L20 8 M6 9 L14 17 M6 11 L14 3" stroke="#5B5E60" stroke-width="1"/></svg>
<div style="left:699px;top:42px;width:15px;height:14px;background:#555859;"></div>
<svg style="left:738px;top:39px;" width="18" height="20" viewBox="0 0 18 20"><rect x="1" y="1" width="10" height="17" fill="none" stroke="#5B5E60" stroke-width="2"/><rect x="4" y="3" width="4" height="13" fill="#5B5E60"/><path d="M8 19 A5 5 0 0 1 17 19 Z" fill="#5B5E60"/></svg>
<svg style="left:774px;top:39px;" width="22" height="20" viewBox="0 0 22 20"><path d="M5 6 L11 15 L17 6" stroke="#8C9398" stroke-width="1.6" fill="none"/><circle cx="5" cy="6.5" r="3.3" fill="#8C9398"/><circle cx="11" cy="15.5" r="3.3" fill="#8C9398"/><path d="M21 1 L15 7 M13 3 V9 H19" stroke="#1E96D0" stroke-width="3" fill="none"/></svg>
<svg style="left:806px;top:39px;" width="22" height="20" viewBox="0 0 22 20"><path d="M5 6 L11 15 L17 6" stroke="#8C9398" stroke-width="1.6" fill="none"/><circle cx="5.5" cy="5.5" r="4.5" fill="#43A332"/><circle cx="17" cy="6.5" r="3.3" fill="#8C9398"/><circle cx="11" cy="15.5" r="3.3" fill="#8C9398"/></svg>
<svg style="left:837px;top:39px;" width="20" height="20" viewBox="0 0 20 20"><path d="M10 7 L15 2 V5.5 H19 V8.5 H15 V12 Z M10 12 L5 17 V13.5 H1 V10.5 H5 V7 Z" fill="#555859"/></svg>
<svg style="left:868px;top:39px;" width="20" height="20" viewBox="0 0 20 20"><rect x="1" y="3" width="10" height="10" fill="none" stroke="#555859" stroke-width="2"/><rect x="4" y="9" width="10" height="9" fill="none" stroke="#555859" stroke-width="2"/><circle cx="14" cy="6" r="5" fill="#555859"/><path d="M14 3 V6 H16.5" stroke="#3C3F41" stroke-width="1" fill="none"/></svg>
<svg style="left:899px;top:39px;" width="20" height="20" viewBox="0 0 20 20"><path d="M2 6 L8 1 V11 Z" fill="#555859"/><path d="M6 6 H13 A5 5 0 0 1 13 16 H4" stroke="#555859" stroke-width="2.8" fill="none"/></svg>
<svg style="left:936px;top:38px;" width="22" height="22" viewBox="0 0 22 22"><circle cx="7" cy="7" r="5.5" fill="#E2A33E"/><circle cx="7" cy="7" r="2.2" fill="#3C3F41"/><path d="M9 11 L16 18" stroke="#A4A7AA" stroke-width="3.5"/><path d="M13 13 L19 13 L19 18 L13 20 Z" fill="#A4A7AA"/><circle cx="18" cy="16" r="1.8" fill="#3C3F41"/><path d="M3 19 L7 15" stroke="#A4A7AA" stroke-width="3"/></svg>
<svg style="left:969px;top:39px;" width="21" height="20" viewBox="0 0 21 20"><rect x="4" y="1" width="13" height="5" fill="none" stroke="#8A8D8F" stroke-width="1.6"/><rect x="1" y="4" width="10" height="14" fill="#8A8D8F"/><rect x="3" y="8" width="6" height="1.5" fill="#3C3F41"/><rect x="3" y="12" width="6" height="1.5" fill="#3C3F41"/><rect x="7" y="15" width="3.5" height="3.5" fill="#3D98D3"/><rect x="12" y="15" width="3.5" height="3.5" fill="#3D98D3"/><rect x="17" y="15" width="3.5" height="3.5" fill="#3D98D3"/><rect x="12" y="10" width="3.5" height="3.5" fill="#3D98D3"/><rect x="17" y="10" width="3.5" height="3.5" fill="#3D98D3"/><rect x="17" y="5" width="3.5" height="3.5" fill="#3D98D3"/></svg>
<svg style="left:1009px;top:39px;" width="20" height="20" viewBox="0 0 20 20"><path d="M6 1 H10 V10 H13 L8 15 L3 10 H6 Z" fill="#555859"/><rect x="0" y="18" width="7" height="1.5" fill="#555859"/><path d="M9 19.5 A5 4.5 0 0 1 19 19.5 Z" fill="#555859"/></svg>
<div class="t s" style="left:1051.00px;top:38.68px;font-size:24px;line-height:24px;color:#3E9BD4;font-weight:bold;font-style:normal;transform:scaleX(0.8185);transform-origin:0 0;">?</div>
<svg style="left:1085px;top:38px;" width="22" height="22" viewBox="0 0 22 22"><rect x="7" y="1" width="13" height="11" fill="#4CAF50" stroke="#6BCB6B" stroke-dasharray="1 1"/><rect x="10" y="3" width="7" height="6" fill="none" stroke="#2E7D32" stroke-width="1.2"/><path d="M1 11 H12 V21 H1 Z" fill="#8A8D8F"/><rect x="3" y="11" width="7" height="4" fill="#E0E0E0"/><rect x="4" y="18" width="5" height="1.5" fill="#E0E0E0"/></svg>
<svg style="left:1655px;top:39px;" width="21" height="21" viewBox="0 0 21 21"><circle cx="8" cy="8" r="6" fill="none" stroke="#AFB1B3" stroke-width="2.3"/><path d="M12.5 12.5 L19 19" stroke="#AFB1B3" stroke-width="3"/></svg>
<svg style="left:40px;top:103px;" width="18" height="17" viewBox="0 0 18 17"><rect x="5" y="1" width="12" height="10" fill="none" stroke="#3D8FCC" stroke-width="1.5"/><rect x="7" y="3" width="8" height="6" fill="#2F5E80"/><path d="M1 5 H6 L8 7 V16 H1 Z" fill="#9A9A9A"/><rect x="2.5" y="8" width="4" height="1" fill="#555"/><rect x="2.5" y="10.5" width="4" height="1" fill="#555"/><rect x="2.5" y="13" width="4" height="1" fill="#555"/></svg>
<svg style="left:35px;top:132px;" width="11" height="10" viewBox="0 0 11 10"><path d="M0 0 H11 L5.5 10 Z" fill="#A6A6A6"/></svg>
<svg style="left:60px;top:128px;" width="20" height="18" viewBox="0 0 20 18"><path d="M0 0 H7 L9 3 H18 V12 H0 Z" fill="#8E9BA4"/><rect x="10" y="9" width="8" height="8" fill="#3A9BD5" stroke="#0D293E" stroke-width="1"/></svg>
<svg style="left:61px;top:155px;" width="10" height="11" viewBox="0 0 10 11"><path d="M0 0 L10 5.5 L0 11 Z" fill="#A6A6A6"/></svg>
<svg style="left:85px;top:153px;" width="19" height="14" viewBox="0 0 19 14"><path d="M0 0 H7 L9 2.5 H18 V13.5 H0 Z" fill="#8E9BA4"/></svg>
<svg style="left:61px;top:179px;" width="10" height="11" viewBox="0 0 10 11"><path d="M0 0 L10 5.5 L0 11 Z" fill="#A6A6A6"/></svg>
<svg style="left:85px;top:177px;" width="19" height="14" viewBox="0 0 19 14"><path d="M0 0 H7 L9 2.5 H18 V13.5 H0 Z" fill="#C7652F"/></svg>
<svg style="left:60px;top:205px;" width="11" height="10" viewBox="0 0 11 10"><path d="M0 0 H11 L5.5 10 Z" fill="#A6A6A6"/></svg>
<svg style="left:85px;top:203px;" width="19" height="14" viewBox="0 0 19 14"><path d="M0 0 H7 L9 2.5 H18 V13.5 H0 Z" fill="#3D8DB8"/></svg>
<svg style="left:86px;top:228px;" width="10" height="11" viewBox="0 0 10 11"><path d="M0 0 L10 5.5 L0 11 Z" fill="#A6A6A6"/></svg>
<svg style="left:110px;top:226px;" width="18" height="14" viewBox="0 0 18 14"><path d="M0 0 H7 L9 2.5 H18 V13.5 H0 Z" fill="#8E9BA4"/><circle cx="6" cy="8" r="2.2" fill="#3C3F41"/></svg>
<svg style="left:86px;top:252px;" width="10" height="11" viewBox="0 0 10 11"><path d="M0 0 L10 5.5 L0 11 Z" fill="#A6A6A6"/></svg>
<svg style="left:110px;top:250px;" width="18" height="14" viewBox="0 0 18 14"><path d="M0 0 H7 L9 2.5 H18 V13.5 H0 Z" fill="#8E9BA4"/><circle cx="6" cy="8" r="2.2" fill="#3C3F41"/></svg>
<svg style="left:86px;top:276px;" width="10" height="11" viewBox="0 0 10 11"><path d="M0 0 L10 5.5 L0 11 Z" fill="#A6A6A6"/></svg>
<svg style="left:110px;top:274px;" width="18" height="14" viewBox="0 0 18 14"><path d="M0 0 H7 L9 2.5 H18 V13.5 H0 Z" fill="#8E9BA4"/><circle cx="6" cy="8" r="2.2" fill="#3C3F41"/></svg>
<svg style="left:110px;top:296px;" width="18" height="18" viewBox="0 0 18 18"><circle cx="9" cy="9" r="8.8" fill="#B88A3E"/><circle cx="9" cy="9" r="4" fill="none" stroke="#3C3F41" stroke-width="1.6"/></svg>
<svg style="left:110px;top:320px;" width="18" height="18" viewBox="0 0 18 18"><circle cx="9" cy="9" r="8.8" fill="#B88A3E"/><circle cx="9" cy="9" r="4" fill="none" stroke="#3C3F41" stroke-width="1.6"/></svg>
<svg style="left:86px;top:343px;" width="18" height="20" viewBox="0 0 18 20"><path d="M4 0 H11 V13 H0 V4 Z" fill="#8E9BA4"/><path d="M0 4 L4 0 V4 Z" fill="#C0C8CC"/><rect x="9" y="11" width="8" height="8" fill="#222"/><rect x="11" y="15" width="4" height="1.5" fill="#DDD"/></svg>
<svg style="left:36px;top:372px;" width="10" height="11" viewBox="0 0 10 11"><path d="M0 0 L10 5.5 L0 11 Z" fill="#A6A6A6"/></svg>
<svg style="left:60px;top:369px;" width="19" height="16" viewBox="0 0 19 16"><rect x="0" y="2" width="2.5" height="13" fill="#8E9BA4"/><rect x="4" y="0" width="2.5" height="15" fill="#6EB33F"/><rect x="8" y="2" width="2.5" height="13" fill="#8E9BA4"/><rect x="12" y="0" width="2.5" height="15" fill="#3FA7E0"/><rect x="16" y="3" width="2.5" height="12" fill="#8E9BA4"/></svg>
<svg style="left:8px;top:176px;" width="18" height="17" viewBox="0 0 18 17"><path d="M1 1 H8 L10 3.5 H16 V12 H1 Z" fill="#8E9BA4"/><rect x="9" y="9" width="8" height="8" fill="#1E1E1E"/><rect x="11" y="13" width="4" height="1.5" fill="#DDD"/></svg>
<svg style="left:9px;top:298px;" width="17" height="18" viewBox="0 0 17 18"><path d="M3 3 H14 L8.5 14 Z" stroke="#8A8D8F" stroke-width="1.2" fill="none"/><circle cx="3" cy="3.5" r="3" fill="#4A9CD6"/><circle cx="14" cy="3.5" r="3" fill="#D9584F"/><circle cx="8.5" cy="14" r="3" fill="#D98E3E"/></svg>
<svg style="left:9px;top:897px;" width="16" height="16" viewBox="0 0 16 16"><path d="M8 0.5 L10.2 5.6 L15.6 6 L11.5 9.6 L12.8 15 L8 12.2 L3.2 15 L4.5 9.6 L0.4 6 L5.8 5.6 Z" fill="#E8A33E"/></svg>
<svg style="left:1597px;top:103px;" width="24" height="16" viewBox="0 0 24 16"><path d="M8 0.5 V15.5 M0.5 8 H15.5 M2.7 2.7 L13.3 13.3 M13.3 2.7 L2.7 13.3" stroke="#8C8C8C" stroke-width="2.6"/><circle cx="8" cy="8" r="5" fill="#8C8C8C"/><circle cx="8" cy="8" r="2" fill="#3C3F41"/><path d="M18 8 H24 L21 11 Z" fill="#8C8C8C"/></svg>
<svg style="left:1630px;top:103px;" width="17" height="16" viewBox="0 0 17 16"><path d="M0 6 H9 M6 3 L9.5 6 L6 9" stroke="#A0A0A0" stroke-width="1.2" fill="none"/><rect x="11.5" y="0.5" width="3" height="14" fill="#8C8C8C"/><rect x="12.5" y="8" width="1" height="5" fill="#3C3F41"/></svg>
<svg style="left:1596px;top:661px;" width="24" height="16" viewBox="0 0 24 16"><path d="M8 0.5 V15.5 M0.5 8 H15.5 M2.7 2.7 L13.3 13.3 M13.3 2.7 L2.7 13.3" stroke="#8C8C8C" stroke-width="2.6"/><circle cx="8" cy="8" r="5" fill="#8C8C8C"/><circle cx="8" cy="8" r="2" fill="#3C3F41"/><path d="M18 8 H24 L21 11 Z" fill="#8C8C8C"/></svg>
<svg style="left:1630px;top:661px;" width="16" height="17" viewBox="0 0 16 17"><path d="M8 0 V10 M4.5 7 L8 10.5 L11.5 7" stroke="#A0A0A0" stroke-width="1.1" fill="none"/><rect x="1" y="12" width="14" height="4" fill="#8C8C8C"/><rect x="9" y="13" width="5" height="1.5" fill="#3C3F41"/></svg>
<svg style="left:1214px;top:134px;" width="19" height="19" viewBox="0 0 19 19"><path d="M8.5 1.8 A7.4 7.4 0 0 0 3.6 14.6" stroke="#3D98D3" stroke-width="3.2" fill="none"/><path d="M0.5 17.7 L9 17.7 L9 8.8 Z" fill="#3D98D3"/><path d="M10 16.4 A7.4 7.4 0 0 0 14.9 3.6" stroke="#3D98D3" stroke-width="3.2" fill="none"/><path d="M18 0.5 L9.5 0.5 L9.5 9.4 Z" fill="#3D98D3"/></svg>
<svg style="left:1245px;top:135px;" width="19" height="18" viewBox="0 0 19 18"><path d="M0 0 H7 L9 2.5 H17 V14 H0 Z" fill="#555859"/><circle cx="13" cy="13" r="4.5" fill="none" stroke="#6A6D6F" stroke-width="1.5"/></svg>
<svg style="left:1276px;top:133px;" width="20" height="20" viewBox="0 0 20 20"><rect x="7" y="0" width="4" height="6" fill="#1E96D0"/><path d="M2.5 5 H15.5 L9 11 Z" fill="#1E96D0"/><rect x="0" y="12" width="17" height="1.5" fill="#C0C0C0"/><rect x="0" y="15" width="17" height="1.5" fill="#C0C0C0"/><rect x="0" y="18" width="13" height="1.5" fill="#C0C0C0"/><path d="M14 16 H20 L17 19.5 Z" fill="#C0C0C0"/></svg>
<svg style="left:1306px;top:134px;" width="1" height="20" viewBox="0 0 1 20"><rect x="0" y="0" width="1" height="1" fill="#6E6E6E"/><rect x="0" y="3" width="1" height="1" fill="#6E6E6E"/><rect x="0" y="6" width="1" height="1" fill="#6E6E6E"/><rect x="0" y="9" width="1" height="1" fill="#6E6E6E"/><rect x="0" y="12" width="1" height="1" fill="#6E6E6E"/><rect x="0" y="15" width="1" height="1" fill="#6E6E6E"/><rect x="0" y="18" width="1" height="1" fill="#6E6E6E"/></svg>
<svg style="left:1316px;top:135px;" width="16" height="16" viewBox="0 0 16 16"><rect x="7" y="0" width="2.2" height="16" fill="#3CB54A"/><rect x="0" y="7" width="16" height="2.2" fill="#3CB54A"/></svg>
<svg style="left:1344px;top:134px;" width="1" height="20" viewBox="0 0 1 20"><rect x="0" y="0" width="1" height="1" fill="#6E6E6E"/><rect x="0" y="3" width="1" height="1" fill="#6E6E6E"/><rect x="0" y="6" width="1" height="1" fill="#6E6E6E"/><rect x="0" y="9" width="1" height="1" fill="#6E6E6E"/><rect x="0" y="12" width="1" height="1" fill="#6E6E6E"/><rect x="0" y="15" width="1" height="1" fill="#6E6E6E"/><rect x="0" y="18" width="1" height="1" fill="#6E6E6E"/></svg>
<svg style="left:1356px;top:134px;" width="14" height="18" viewBox="0 0 14 18"><path d="M0.5 0.5 L13 9 L0.5 17.5 Z" fill="#555859"/></svg>
<svg style="left:1385px;top:134px;" width="20" height="19" viewBox="0 0 20 19"><rect x="0" y="2" width="17" height="11" fill="#8A8D8F"/><rect x="2" y="5" width="13" height="1.5" fill="#3C3F41"/><rect x="2" y="8" width="9" height="1.5" fill="#3C3F41"/><rect x="0" y="12" width="8" height="6" fill="#8A8D8F"/><text x="8" y="18.5" font-family="Liberation Sans" font-style="italic" font-weight="bold" font-size="12" fill="#3FA7E0">m</text></svg>
<svg style="left:1416px;top:134px;" width="19" height="18" viewBox="0 0 19 18"><rect x="0" y="6" width="18" height="6" fill="#3487B8"/><path d="M8 0 L4 18 M13 0 L9 18" stroke="#C8D8E0" stroke-width="1.8"/></svg>
<svg style="left:1447px;top:134px;" width="19" height="19" viewBox="0 0 19 19"><circle cx="9.5" cy="9.5" r="9" fill="#3487B8"/><path d="M11 3 L6 10.5 H9.5 L8 16 L13 8.5 H9.5 Z" fill="#3C3F41"/></svg>
<svg style="left:1478px;top:135px;" width="18" height="17" viewBox="0 0 18 17"><rect x="0" y="7" width="18" height="1.5" fill="#555859"/><rect x="0" y="10" width="18" height="1.5" fill="#555859"/><path d="M5 0 H13 L9 5 Z M5 17 H13 L9 12 Z" fill="#555859"/></svg>
<svg style="left:1507px;top:134px;" width="1" height="20" viewBox="0 0 1 20"><rect x="0" y="0" width="1" height="1" fill="#6E6E6E"/><rect x="0" y="3" width="1" height="1" fill="#6E6E6E"/><rect x="0" y="6" width="1" height="1" fill="#6E6E6E"/><rect x="0" y="9" width="1" height="1" fill="#6E6E6E"/><rect x="0" y="12" width="1" height="1" fill="#6E6E6E"/><rect x="0" y="15" width="1" height="1" fill="#6E6E6E"/><rect x="0" y="18" width="1" height="1" fill="#6E6E6E"/></svg>
<svg style="left:1516px;top:134px;" width="20" height="19" viewBox="0 0 20 19"><rect x="0.5" y="0.5" width="13" height="13" fill="#8A8D8F"/><rect x="2.5" y="2.5" width="9" height="9" fill="#4A4D4F"/><circle cx="7" cy="7" r="3.5" fill="#E2A33E"/><circle cx="7" cy="7" r="1.3" fill="#4A4D4F"/><path d="M8 16 L16 9" stroke="#A4A7AA" stroke-width="3"/><circle cx="17" cy="8" r="2.5" fill="none" stroke="#A4A7AA" stroke-width="1.5"/></svg>
<svg style="left:1409px;top:225px;" width="14" height="14" viewBox="0 0 14 14"><rect x="6" y="0" width="2" height="13" fill="#3CB54A"/><rect x="0" y="5.5" width="13" height="2" fill="#3CB54A"/></svg>
<svg style="left:1294px;top:243px;" width="16" height="16" viewBox="0 0 16 16"><g transform="scale(0.83)"><path d="M8.5 1.8 A7.4 7.4 0 0 0 3.6 14.6" stroke="#3D98D3" stroke-width="3.2" fill="none"/><path d="M0.5 17.7 L9 17.7 L9 8.8 Z" fill="#3D98D3"/><path d="M10 16.4 A7.4 7.4 0 0 0 14.9 3.6" stroke="#3D98D3" stroke-width="3.2" fill="none"/><path d="M18 0.5 L9.5 0.5 L9.5 9.4 Z" fill="#3D98D3"/></g></svg>
<svg style="left:1660px;top:110px;" width="14" height="16" viewBox="0 0 14 16"><path d="M3 1 L6 4 M11 1 L8 4 M1 6 L4 7 M13 6 L10 7 M1 11 L4 10 M13 11 L10 10 M2 15 L4.5 12 M12 15 L9.5 12" stroke="#A8A8A8" stroke-width="1"/><ellipse cx="7" cy="4.5" rx="3" ry="2.5" fill="#B580D1"/><ellipse cx="7" cy="8.5" rx="2" ry="2" fill="#B580D1"/><ellipse cx="7" cy="12.5" rx="3.5" ry="3" fill="#B580D1"/></svg>
<div class="t s" style="left:1659px;top:218px;font-size:20px;line-height:20px;color:#3592C4;font-style:italic;font-weight:bold;">m</div>
<svg style="left:1659px;top:371px;" width="17" height="18" viewBox="0 0 17 18"><ellipse cx="8.5" cy="3" rx="8" ry="2.5" fill="#3592C4"/><path d="M0.5 5.5 Q8.5 9 16.5 5.5 V8 Q8.5 11.5 0.5 8 Z" fill="#3592C4"/><path d="M0.5 10 Q8.5 13.5 16.5 10 V12.5 Q8.5 16 0.5 12.5 Z" fill="#3592C4"/><path d="M0.5 14.5 Q8.5 18 16.5 14.5 V15.5 Q8.5 19 0.5 15.5 Z" fill="#3592C4"/></svg>
<div style="left:31px;top:682px;width:37px;height:244px;background:#3C3F41;"></div>
<div style="left:31px;top:682px;width:1622px;height:1px;background:#2B2B2B;"></div>
<svg style="left:38px;top:691px;" width="21" height="21" viewBox="0 0 21 21"><path d="M5 0.8 L9 3 V7.5 L5 9.8 L1 7.5 V3 Z" fill="#E2A33E"/><circle cx="5" cy="5.3" r="1.7" fill="#3C3F41"/><path d="M14 8 L5.5 17" stroke="#A4A7AA" stroke-width="3.4" stroke-linecap="round"/><circle cx="15" cy="6.5" r="4.6" fill="#A4A7AA"/><path d="M15.5 6 L18 0 L21.5 3.5 Z" fill="#3C3F41"/><circle cx="15.5" cy="6" r="1.5" fill="#3C3F41"/></svg>
<div style="left:35px;top:719px;width:27px;height:27px;border:1px solid #5E6164;border-radius:3px;background:#4A4D50;"></div>
<svg style="left:39px;top:723px;" width="20" height="21" viewBox="0 0 20 21"><path d="M4 1.5 H15 Q18 1.5 18 4.5 V11 Q18 14 15 14 H13 L12 18 L9 14 H4 Q1 14 1 11 V4.5 Q1 1.5 4 1.5 Z" fill="#46677F" stroke="#3FA7E0" stroke-width="2" stroke-linejoin="round"/></svg>
<svg style="left:39px;top:753px;" width="21" height="20" viewBox="0 0 21 20"><path d="M1 2 H11 M7 10 H14 M1 17 H11" stroke="#9A9A9A" stroke-width="1.6"/><path d="M15 1 Q19 1 19 4 Q19 7 15 7" stroke="#3FA7E0" stroke-width="1.6" fill="none"/><path d="M16 4.5 L12.5 7 L16 9.5 Z" fill="#3FA7E0"/><path d="M5 6 Q1.5 6 1.5 9 Q1.5 12 5 12" stroke="#3FA7E0" stroke-width="1.6" fill="none"/><path d="M4 9.5 L7.5 12 L4 14.5 Z" fill="#3FA7E0"/><path d="M15 10 Q19 10 19 13 Q19 16 15 16" stroke="#3FA7E0" stroke-width="1.6" fill="none"/><path d="M16 13.5 L12.5 16 L16 18.5 Z" fill="#3FA7E0"/></svg>
<div style="left:35px;top:780px;width:27px;height:27px;border:1px solid #5E6164;border-radius:3px;background:#4A4D50;"></div>
<svg style="left:39px;top:784px;" width="20" height="20" viewBox="0 0 20 20"><rect x="1" y="3" width="17" height="15" fill="#5A5D60" stroke="#8A8D8F" stroke-width="1.5"/><rect x="1" y="3" width="17" height="3" fill="#8A8D8F"/><rect x="12" y="1" width="3" height="8" fill="#B57FD8"/><path d="M9.5 8 H17.5 L13.5 13 Z" fill="#B57FD8"/></svg>
<svg style="left:39px;top:816px;" width="20" height="20" viewBox="0 0 20 20"><rect x="1" y="1" width="13" height="13" fill="none" stroke="#555859" stroke-width="1.6"/><rect x="5" y="5" width="14" height="14" fill="#3C3F41" stroke="#555859" stroke-width="1.6"/><path d="M8 12 L11 15 L16 9" stroke="#555859" stroke-width="1.6" fill="none"/></svg>
<svg style="left:40px;top:847px;" width="18" height="20" viewBox="0 0 18 20"><rect x="1" y="3" width="16" height="2" fill="#555859"/><rect x="6" y="0.5" width="6" height="2.5" fill="#555859"/><path d="M2 6 H16 L15 19 H3 Z" fill="#555859"/><path d="M6 8 V17 M9 8 V17 M12 8 V17" stroke="#3C3F41" stroke-width="1"/></svg>
<div class="t s" style="left:43.50px;top:878.38px;font-size:22px;line-height:22px;color:#3E9BD4;font-weight:bold;font-style:normal;transform:scaleX(0.8929);transform-origin:0 0;">?</div>
<svg style="left:1549px;top:932px;" width="22" height="19" viewBox="0 0 22 19"><path d="M10.5 1.5 C5.5 1.5 1.5 4.5 1.5 8.5 C1.5 12.5 5.5 15 10.5 15 C11.5 15 12.5 15 13.5 14.5 L18 17.5 L16.5 13.5 C18.5 12 19.5 10.5 19.5 8.5 C19.5 4.5 15.5 1.5 10.5 1.5 Z" fill="none" stroke="#A0A0A0" stroke-width="1.4"/></svg>
<div style="left:13px;top:959px;width:16px;height:14px;border:1.5px solid #8A8D8F;background:#5A5D60;"></div>
<svg style="left:1347px;top:959px;" width="17" height="9" viewBox="0 0 17 9"><circle cx="8.5" cy="9" r="7.5" fill="none" stroke="#B0B0B0" stroke-width="1.5"/><path d="M3 9 A5.5 5.5 0 0 1 11 4" stroke="#3CB54A" stroke-width="2" fill="none"/><path d="M8.5 9 L12 4" stroke="#E0E0E0" stroke-width="1.2"/><path d="M8 8 L11 5" stroke="#D9584F" stroke-width="1"/></svg>
<div class="t s" style="left:1398.50px;top:962.30px;font-size:15px;line-height:15px;color:#BBBBBB;font-weight:normal;font-style:normal;transform-origin:0 0;">55:8</div>
<div class="t s" style="left:1444.00px;top:962.30px;font-size:15px;line-height:15px;color:#BBBBBB;font-weight:normal;font-style:normal;transform-origin:0 0;">CRLF</div>
<svg style="left:1483px;top:962px;" width="8" height="6" viewBox="0 0 8 6"><path d="M4 0 L8 4 L4 8 L0 4 Z" fill="#BBBBBB"/></svg>
<div class="t s" style="left:1500.00px;top:962.30px;font-size:15px;line-height:15px;color:#BBBBBB;font-weight:normal;font-style:normal;transform-origin:0 0;">UTF-8</div>
<svg style="left:1545px;top:962px;" width="8" height="6" viewBox="0 0 8 6"><path d="M4 0 L8 4 L4 8 L0 4 Z" fill="#BBBBBB"/></svg>
<div style="left:1566px;top:963px;width:6px;height:5px;background:#9A9A9A;"></div>
<div style="left:1594px;top:963px;width:19px;height:6px;background:#4C8A4C;"></div>
<div class="t s" style="left:1597.00px;top:964.00px;font-size:13px;line-height:13px;color:#DDDDDD;font-weight:bold;font-style:normal;transform-origin:0 0;">[T]</div>
<div style="left:1626px;top:963px;width:15px;height:5px;background:#555859;"></div>
<svg style="left:1657px;top:961px;" width="13" height="7" viewBox="0 0 13 7"><path d="M2 7 V4 A4.5 4 0 0 1 11 4 V7" stroke="#9A9A9A" stroke-width="1.6" fill="none"/></svg>
<div style="left:1377px;top:745px;width:206px;height:23px;background:#F4F7FB;border:1px solid #D5DCE6;"></div>
<svg style="left:1353px;top:740px;" width="32" height="30" viewBox="0 0 32 30"><g transform="rotate(-12 16 15)"><rect x="3" y="3" width="26" height="24" rx="4" fill="#F15A22"/><path d="M22 8 C17 6 9 7 9 11 C9 15 22 13 22 18 C22 22 13 23 8 21" stroke="#FFFFFF" stroke-width="4" fill="none" stroke-linecap="round"/></g></svg>
<svg style="left:1411px;top:747px;" width="16" height="17" viewBox="0 0 16 17"><circle cx="8" cy="9" r="7" fill="#2276C9"/><circle cx="4.5" cy="5" r="6.8" fill="#F4F7FB"/></svg>
<svg style="left:1435px;top:748px;" width="12" height="14" viewBox="0 0 12 14"><circle cx="3" cy="4" r="1.8" fill="#2276C9"/><path d="M9 7 Q10 11 7 13" stroke="#2276C9" stroke-width="2.2" fill="none"/><circle cx="8.5" cy="7.5" r="1.5" fill="#2276C9"/></svg>
<svg style="left:1453px;top:748px;" width="17" height="17" viewBox="0 0 17 17"><circle cx="8.5" cy="8.5" r="7.2" fill="none" stroke="#2276C9" stroke-width="1.8"/><circle cx="6" cy="6.5" r="1.1" fill="#2276C9"/><circle cx="11" cy="6.5" r="1.1" fill="#2276C9"/><path d="M5 10 Q8.5 13.5 12 10" stroke="#2276C9" stroke-width="1.5" fill="none"/></svg>
<svg style="left:1477px;top:747px;" width="14" height="18" viewBox="0 0 14 18"><rect x="4" y="0.5" width="6" height="11" rx="3" fill="#2276C9"/><path d="M1.5 7.5 Q7 15 12.5 7.5" stroke="#2276C9" stroke-width="1.6" fill="none"/><rect x="6.2" y="12" width="1.6" height="4" fill="#2276C9"/><rect x="3.5" y="15.5" width="7" height="1.6" fill="#2276C9"/></svg>
<svg style="left:1497px;top:750px;" width="18" height="12" viewBox="0 0 18 12"><rect x="1" y="1" width="16" height="10" rx="1" fill="none" stroke="#2276C9" stroke-width="1.6"/><rect x="3" y="3.5" width="2" height="1.5" fill="#2276C9"/><rect x="3" y="6.5" width="2" height="1.5" fill="#2276C9"/><rect x="6" y="3.5" width="2" height="1.5" fill="#2276C9"/><rect x="6" y="6.5" width="2" height="1.5" fill="#2276C9"/><rect x="9" y="3.5" width="2" height="1.5" fill="#2276C9"/><rect x="9" y="6.5" width="2" height="1.5" fill="#2276C9"/><rect x="12" y="3.5" width="2" height="1.5" fill="#2276C9"/><rect x="12" y="6.5" width="2" height="1.5" fill="#2276C9"/></svg>
<svg style="left:1521px;top:747px;" width="20" height="18" viewBox="0 0 20 18"><circle cx="7" cy="4" r="3.5" fill="#2276C9"/><path d="M1 14 Q1 8 7 8 Q12 8 12 13 V15 H1 Z" fill="#2276C9"/><rect x="8" y="10" width="11" height="7.5" rx="1" fill="#2276C9" stroke="#F4F7FB" stroke-width="0.8"/><text x="9" y="16.5" font-family="Liberation Sans" font-weight="bold" font-size="7.5" fill="#FFFFFF">44</text></svg>
<svg style="left:1543px;top:747px;" width="15" height="17" viewBox="0 0 15 17"><path d="M4.5 1 L1 4 L2.5 8 L4 7.5 V16 H11 V7.5 L12.5 8 L14 4 L10.5 1 Q7.5 3 4.5 1 Z" fill="#2276C9"/></svg>
<svg style="left:1564px;top:747px;" width="17" height="17" viewBox="0 0 17 17"><path d="M2.5 15 L10 7.5" stroke="#2276C9" stroke-width="3.2" stroke-linecap="round"/><circle cx="11.5" cy="5.5" r="4.5" fill="#2276C9"/><path d="M11.5 5.5 L15 0 L17 4 Z" fill="#F4F7FB"/></svg>
<svg style="left:598px;top:442px;" width="17" height="17" viewBox="0 0 17 17"><g transform="scale(1.0)"><path d="M1 1.5 H15.5 M2.5 1.5 V9 Q2.5 13 0.5 16 M8.5 2 L7.5 4 M5 4 H13 V9.5 H5 Z M5 6.7 H13 M9 9.5 V15 Q9 16 7.5 15.5 M6.5 11 L4.5 14 M11.5 11 L14 14" stroke="#808080" stroke-width="1.10" fill="none"/></g></svg>
<svg style="left:617px;top:442px;" width="17" height="17" viewBox="0 0 17 17"><g transform="scale(1.0)"><path d="M4 1 L2 5 M3 4 H13 M8 0.5 V8 M0.5 8 H15.5 M6 8 Q6 14 1 16 M10 8 V14.5 Q10 15.5 12 15.5 H15 V13" stroke="#808080" stroke-width="1.10" fill="none"/></g></svg>
<svg style="left:636px;top:442px;" width="17" height="17" viewBox="0 0 17 17"><g transform="scale(1.0)"><path d="M5 0.5 L0.5 8 M3.5 5 V16 M6.5 6 L15 5 M10 0.5 Q11 10 15.5 15.5 M12.5 1 L14 3" stroke="#808080" stroke-width="1.10" fill="none"/></g></svg>
<svg style="left:655px;top:442px;" width="17" height="17" viewBox="0 0 17 17"><g transform="scale(1.0)"><path d="M0.5 2 H6.5 M3.5 2 L1 9 M1.5 8.5 H6 V14.5 H1.5 Z M8.5 1.5 H14 L13.3 7 M9.5 1.5 L8.8 8 H15 V14 Q15 15.5 13 15.5 M8 11 H13" stroke="#808080" stroke-width="1.10" fill="none"/></g></svg>
<div style="left:675px;top:450px;width:3px;height:2.5px;background:#808080;"></div>
<div style="left:675px;top:455px;width:3px;height:2.5px;background:#808080;"></div>
<svg style="left:533px;top:514px;" width="17" height="17" viewBox="0 0 17 17"><g transform="scale(1.0)"><path d="M6.5 0.5 L4 4 H12.5 L11 2.5 M1 6.5 H15 M7.5 4 Q6 9 1 11 M8.5 6 Q10 9 15 11 M10 8.5 L6 11 M12 10.5 L5 14 M14 12.5 Q9 16 3 16.5" stroke="#808080" stroke-width="1.10" fill="none"/></g></svg>
<svg style="left:553px;top:514px;" width="17" height="17" viewBox="0 0 17 17"><g transform="scale(1.0)"><path d="M4.2 0.5 V8 M0.5 5 H8 M1.5 2 L3 4 M7 2 L5.5 4 M3 8 L6 9 M0.5 11 H8 M5 9 Q4 14 1 15.5 M2 12 Q6 14 7.5 15.5 M11 0.5 L9 6 M9.5 4 H15.5 M14 4 Q12 12 8.5 15.5 M10 8 Q12 13 15.5 15.5" stroke="#808080" stroke-width="1.10" fill="none"/></g></svg>
<svg style="left:526px;top:514px;" width="10" height="17" viewBox="0 0 10 17"><path d="M-2 16 Q4 12 8 16" stroke="#808080" stroke-width="1.1" fill="none"/></svg>
<svg style="left:578px;top:562px;" width="17" height="17" viewBox="0 0 17 17"><g transform="scale(1.0)"><path d="M1 1.5 H15.5 M2.5 1.5 V9 Q2.5 13 0.5 16 M8.5 2 L7.5 4 M5 4 H13 V9.5 H5 Z M5 6.7 H13 M9 9.5 V15 Q9 16 7.5 15.5 M6.5 11 L4.5 14 M11.5 11 L14 14" stroke="#808080" stroke-width="1.10" fill="none"/></g></svg>
<svg style="left:597px;top:562px;" width="17" height="17" viewBox="0 0 17 17"><g transform="scale(1.0)"><path d="M2 3.5 H14 M8 0.5 V16 M0.5 8 H15.5 M4.5 4.5 L6 7 M11.5 4.5 L10 7 M7.5 8.5 Q5 13 0.5 15.5 M8.5 8.5 Q11 13 15.5 15.5" stroke="#808080" stroke-width="1.10" fill="none"/></g></svg>
<svg style="left:616px;top:562px;" width="17" height="17" viewBox="0 0 17 17"><g transform="scale(1.0)"><path d="M3.5 0.5 L2.5 3 M1 3 H6.5 V15 H1 Z M1 9 H6.5 M9.5 0.5 L8 5 M8.5 4 H15 V14 Q15 15.5 13 15.5 M10 8 L11.5 10" stroke="#808080" stroke-width="1.10" fill="none"/></g></svg>
<svg style="left:635px;top:562px;" width="17" height="17" viewBox="0 0 17 17"><g transform="scale(1.0)"><path d="M5 0.5 L0.5 8 M3.5 5 V16 M6.5 6 L15 5 M10 0.5 Q11 10 15.5 15.5 M12.5 1 L14 3" stroke="#808080" stroke-width="1.10" fill="none"/></g></svg>
<svg style="left:654px;top:562px;" width="17" height="17" viewBox="0 0 17 17"><g transform="scale(1.0)"><path d="M0.5 2 H6.5 M3.5 2 L1 9 M1.5 8.5 H6 V14.5 H1.5 Z M8.5 1.5 H14 L13.3 7 M9.5 1.5 L8.8 8 H15 V14 Q15 15.5 13 15.5 M8 11 H13" stroke="#808080" stroke-width="1.10" fill="none"/></g></svg>
<svg style="left:578px;top:586px;" width="17" height="17" viewBox="0 0 17 17"><g transform="scale(1.0)"><path d="M1 1.5 H15.5 M2.5 1.5 V9 Q2.5 13 0.5 16 M8.5 2 L7.5 4 M5 4 H13 V9.5 H5 Z M5 6.7 H13 M9 9.5 V15 Q9 16 7.5 15.5 M6.5 11 L4.5 14 M11.5 11 L14 14" stroke="#808080" stroke-width="1.10" fill="none"/></g></svg>
<svg style="left:597px;top:586px;" width="17" height="17" viewBox="0 0 17 17"><g transform="scale(1.0)"><path d="M2 3.5 H14 M8 0.5 V16 M0.5 8 H15.5 M4.5 4.5 L6 7 M11.5 4.5 L10 7 M7.5 8.5 Q5 13 0.5 15.5 M8.5 8.5 Q11 13 15.5 15.5" stroke="#808080" stroke-width="1.10" fill="none"/></g></svg>
<svg style="left:616px;top:586px;" width="17" height="17" viewBox="0 0 17 17"><g transform="scale(1.0)"><path d="M3.5 0.5 L2.5 3 M1 3 H6.5 V15 H1 Z M1 9 H6.5 M9.5 0.5 L8 5 M8.5 4 H15 V14 Q15 15.5 13 15.5 M10 8 L11.5 10" stroke="#808080" stroke-width="1.10" fill="none"/></g></svg>
<svg style="left:635px;top:586px;" width="17" height="17" viewBox="0 0 17 17"><g transform="scale(1.0)"><path d="M5 0.5 L0.5 8 M3.5 5 V16 M6.5 6 L15 5 M10 0.5 Q11 10 15.5 15.5 M12.5 1 L14 3" stroke="#808080" stroke-width="1.10" fill="none"/></g></svg>
<svg style="left:654px;top:586px;" width="17" height="17" viewBox="0 0 17 17"><g transform="scale(1.0)"><path d="M0.5 2 H6.5 M3.5 2 L1 9 M1.5 8.5 H6 V14.5 H1.5 Z M8.5 1.5 H14 L13.3 7 M9.5 1.5 L8.8 8 H15 V14 Q15 15.5 13 15.5 M8 11 H13" stroke="#808080" stroke-width="1.10" fill="none"/></g></svg>
<svg style="left:578px;top:610px;" width="17" height="17" viewBox="0 0 17 17"><g transform="scale(1.0)"><path d="M1 1.5 H15.5 M2.5 1.5 V9 Q2.5 13 0.5 16 M8.5 2 L7.5 4 M5 4 H13 V9.5 H5 Z M5 6.7 H13 M9 9.5 V15 Q9 16 7.5 15.5 M6.5 11 L4.5 14 M11.5 11 L14 14" stroke="#808080" stroke-width="1.10" fill="none"/></g></svg>
<svg style="left:597px;top:610px;" width="17" height="17" viewBox="0 0 17 17"><g transform="scale(1.0)"><path d="M2 3.5 H14 M8 0.5 V16 M0.5 8 H15.5 M4.5 4.5 L6 7 M11.5 4.5 L10 7 M7.5 8.5 Q5 13 0.5 15.5 M8.5 8.5 Q11 13 15.5 15.5" stroke="#808080" stroke-width="1.10" fill="none"/></g></svg>
<svg style="left:616px;top:610px;" width="17" height="17" viewBox="0 0 17 17"><g transform="scale(1.0)"><path d="M3.5 0.5 L2.5 3 M1 3 H6.5 V15 H1 Z M1 9 H6.5 M9.5 0.5 L8 5 M8.5 4 H15 V14 Q15 15.5 13 15.5 M10 8 L11.5 10" stroke="#808080" stroke-width="1.10" fill="none"/></g></svg>
<svg style="left:635px;top:610px;" width="17" height="17" viewBox="0 0 17 17"><g transform="scale(1.0)"><path d="M5 0.5 L0.5 8 M3.5 5 V16 M6.5 6 L15 5 M10 0.5 Q11 10 15.5 15.5 M12.5 1 L14 3" stroke="#808080" stroke-width="1.10" fill="none"/></g></svg>
<svg style="left:654px;top:610px;" width="17" height="17" viewBox="0 0 17 17"><g transform="scale(1.0)"><path d="M0.5 2 H6.5 M3.5 2 L1 9 M1.5 8.5 H6 V14.5 H1.5 Z M8.5 1.5 H14 L13.3 7 M9.5 1.5 L8.8 8 H15 V14 Q15 15.5 13 15.5 M8 11 H13" stroke="#808080" stroke-width="1.10" fill="none"/></g></svg>
<svg style="left:1389px;top:748px;" width="16" height="16" viewBox="0 0 16 16"><g transform="scale(0.9375)"><path d="M1 3 H15 M5 0.5 V5.5 M11 0.5 V5.5 M2.5 10.5 V6.5 H13.5 V10.5 M0.5 10.5 H15.5 M8 5 V10.5 Q7 14.5 1 16 M8.5 11 Q11 14.5 15.5 16" stroke="#2276C9" stroke-width="2.35" fill="none"/></g></svg>
<div style="left:128px;top:97px;width:401px;height:871px;background:#3C3F41;"></div>
<div style="left:128px;top:97px;width:401px;height:1px;background:#555555;"></div>
<div style="left:128px;top:97px;width:1px;height:871px;background:#555555;"></div>
<div style="left:528px;top:97px;width:1px;height:871px;background:#555555;"></div>
<div class="t s" style="left:159.20px;top:105.46px;font-size:16px;line-height:16px;color:#BBBBBB;font-weight:normal;font-style:normal;transform:scaleX(1.0216);transform-origin:0 0;">New</div>
<svg style="left:509px;top:106px;" width="8" height="12" viewBox="0 0 8 12"><path d="M0 0 L7 6 L0 12 Z" fill="#C5C5C5"/></svg>
<div class="t s" style="left:159.20px;top:132.46px;font-size:16px;line-height:16px;color:#BBBBBB;font-weight:normal;font-style:normal;transform:scaleX(1.0233);transform-origin:0 0;">Add Framework Support...</div>
<div style="left:129px;top:154px;width:399px;height:1px;background:#515151;"></div>
<div class="t s" style="left:159.20px;top:163.46px;font-size:16px;line-height:16px;color:#BBBBBB;font-weight:normal;font-style:normal;transform:scaleX(0.9840);transform-origin:0 0;">Cu<u>t</u></div>
<div class="t s" style="left:467.40px;top:163.46px;font-size:16px;line-height:16px;color:#BBBBBB;font-weight:normal;font-style:normal;transform:scaleX(1.0312);transform-origin:0 0;">Ctrl+X</div>
<div class="t s" style="left:159.20px;top:190.46px;font-size:16px;line-height:16px;color:#BBBBBB;font-weight:normal;font-style:normal;transform:scaleX(1.0066);transform-origin:0 0;"><u>C</u>opy</div>
<div class="t s" style="left:467.40px;top:190.46px;font-size:16px;line-height:16px;color:#BBBBBB;font-weight:normal;font-style:normal;transform:scaleX(1.0113);transform-origin:0 0;">Ctrl+C</div>
<div class="t s" style="left:159.20px;top:217.46px;font-size:16px;line-height:16px;color:#BBBBBB;font-weight:normal;font-style:normal;transform:scaleX(0.9851);transform-origin:0 0;">C<u>o</u>py Path</div>
<div class="t s" style="left:423.20px;top:217.46px;font-size:16px;line-height:16px;color:#BBBBBB;font-weight:normal;font-style:normal;transform:scaleX(1.0385);transform-origin:0 0;">Ctrl+Shift+C</div>
<div class="t s" style="left:159.20px;top:244.46px;font-size:16px;line-height:16px;color:#BBBBBB;font-weight:normal;font-style:normal;transform:scaleX(0.9886);transform-origin:0 0;">Cop<u>y</u> Relative Path</div>
<div class="t s" style="left:391.20px;top:244.46px;font-size:16px;line-height:16px;color:#BBBBBB;font-weight:normal;font-style:normal;transform:scaleX(1.0637);transform-origin:0 0;">Ctrl+Alt+Shift+C</div>
<div class="t s" style="left:159.20px;top:271.46px;font-size:16px;line-height:16px;color:#BBBBBB;font-weight:normal;font-style:normal;transform:scaleX(0.9410);transform-origin:0 0;"><u>P</u>aste</div>
<div class="t s" style="left:467.40px;top:271.46px;font-size:16px;line-height:16px;color:#BBBBBB;font-weight:normal;font-style:normal;transform:scaleX(1.0312);transform-origin:0 0;">Ctrl+V</div>
<div style="left:129px;top:293px;width:399px;height:1px;background:#515151;"></div>
<div class="t s" style="left:159.20px;top:302.46px;font-size:16px;line-height:16px;color:#BBBBBB;font-weight:normal;font-style:normal;transform:scaleX(0.9586);transform-origin:0 0;">Find <u>U</u>sages</div>
<div class="t s" style="left:465.20px;top:302.46px;font-size:16px;line-height:16px;color:#BBBBBB;font-weight:normal;font-style:normal;transform:scaleX(1.0388);transform-origin:0 0;">Alt+F7</div>
<div class="t s" style="left:159.20px;top:329.46px;font-size:16px;line-height:16px;color:#BBBBBB;font-weight:normal;font-style:normal;transform:scaleX(0.9633);transform-origin:0 0;">Find in <u>P</u>ath...</div>
<div class="t s" style="left:425.10px;top:329.46px;font-size:16px;line-height:16px;color:#BBBBBB;font-weight:normal;font-style:normal;transform:scaleX(1.0379);transform-origin:0 0;">Ctrl+Shift+F</div>
<div class="t s" style="left:159.20px;top:356.46px;font-size:16px;line-height:16px;color:#BBBBBB;font-weight:normal;font-style:normal;transform:scaleX(0.9668);transform-origin:0 0;">Repl<u>a</u>ce in Path...</div>
<div class="t s" style="left:423.20px;top:356.46px;font-size:16px;line-height:16px;color:#BBBBBB;font-weight:normal;font-style:normal;transform:scaleX(1.0385);transform-origin:0 0;">Ctrl+Shift+R</div>
<div class="t s" style="left:159.20px;top:383.46px;font-size:16px;line-height:16px;color:#BBBBBB;font-weight:normal;font-style:normal;transform:scaleX(0.9697);transform-origin:0 0;">Analy<u>z</u>e</div>
<svg style="left:509px;top:384px;" width="8" height="12" viewBox="0 0 8 12"><path d="M0 0 L7 6 L0 12 Z" fill="#C5C5C5"/></svg>
<div style="left:129px;top:405px;width:399px;height:1px;background:#515151;"></div>
<div class="t s" style="left:159.20px;top:414.46px;font-size:16px;line-height:16px;color:#BBBBBB;font-weight:normal;font-style:normal;transform:scaleX(1.0121);transform-origin:0 0;"><u>R</u>efactor</div>
<svg style="left:509px;top:415px;" width="8" height="12" viewBox="0 0 8 12"><path d="M0 0 L7 6 L0 12 Z" fill="#C5C5C5"/></svg>
<div style="left:129px;top:436px;width:399px;height:1px;background:#515151;"></div>
<div class="t s" style="left:159.20px;top:445.46px;font-size:16px;line-height:16px;color:#BBBBBB;font-weight:normal;font-style:normal;transform:scaleX(1.0326);transform-origin:0 0;">Add to F<u>a</u>vorites</div>
<svg style="left:509px;top:446px;" width="8" height="12" viewBox="0 0 8 12"><path d="M0 0 L7 6 L0 12 Z" fill="#C5C5C5"/></svg>
<div class="t s" style="left:159.20px;top:472.46px;font-size:16px;line-height:16px;color:#BBBBBB;font-weight:normal;font-style:normal;transform:scaleX(0.9966);transform-origin:0 0;">Show Image Thumbnails</div>
<div class="t s" style="left:424.30px;top:472.46px;font-size:16px;line-height:16px;color:#BBBBBB;font-weight:normal;font-style:normal;transform:scaleX(1.0473);transform-origin:0 0;">Ctrl+Shift+T</div>
<div style="left:129px;top:494px;width:399px;height:1px;background:#515151;"></div>
<div class="t s" style="left:159.20px;top:503.46px;font-size:16px;line-height:16px;color:#BBBBBB;font-weight:normal;font-style:normal;transform:scaleX(1.0148);transform-origin:0 0;"><u>R</u>eformat Code</div>
<div class="t s" style="left:437.00px;top:503.46px;font-size:16px;line-height:16px;color:#BBBBBB;font-weight:normal;font-style:normal;transform:scaleX(1.0781);transform-origin:0 0;">Ctrl+Alt+L</div>
<div class="t s" style="left:159.20px;top:530.46px;font-size:16px;line-height:16px;color:#BBBBBB;font-weight:normal;font-style:normal;transform:scaleX(1.0445);transform-origin:0 0;">Optimi<u>z</u>e Imports</div>
<div class="t s" style="left:433.00px;top:530.46px;font-size:16px;line-height:16px;color:#BBBBBB;font-weight:normal;font-style:normal;transform:scaleX(1.0805);transform-origin:0 0;">Ctrl+Alt+O</div>
<div class="t s" style="left:159.20px;top:557.46px;font-size:16px;line-height:16px;color:#BBBBBB;font-weight:normal;font-style:normal;transform:scaleX(1.0326);transform-origin:0 0;">Remove Module</div>
<div class="t s" style="left:466.10px;top:557.46px;font-size:16px;line-height:16px;color:#BBBBBB;font-weight:normal;font-style:normal;transform:scaleX(1.0292);transform-origin:0 0;">Delete</div>
<div style="left:129px;top:579px;width:399px;height:1px;background:#515151;"></div>
<div class="t s" style="left:159.20px;top:588.46px;font-size:16px;line-height:16px;color:#BBBBBB;font-weight:normal;font-style:normal;transform:scaleX(1.0380);transform-origin:0 0;">Build <u>M</u>odule &#x27;chengLayout&#x27;</div>
<div class="t s" style="left:159.20px;top:615.46px;font-size:16px;line-height:16px;color:#BBBBBB;font-weight:normal;font-style:normal;transform:scaleX(1.0414);transform-origin:0 0;">R<u>e</u>build Module &#x27;chengLayout&#x27;</div>
<div class="t s" style="left:415.90px;top:615.46px;font-size:16px;line-height:16px;color:#BBBBBB;font-weight:normal;font-style:normal;transform:scaleX(1.0376);transform-origin:0 0;">Ctrl+Shift+F9</div>
<div style="left:129px;top:637px;width:399px;height:1px;background:#515151;"></div>
<div class="t s" style="left:159.20px;top:646.46px;font-size:16px;line-height:16px;color:#BBBBBB;font-weight:normal;font-style:normal;transform:scaleX(1.0186);transform-origin:0 0;">Local <u>H</u>istory</div>
<svg style="left:509px;top:647px;" width="8" height="12" viewBox="0 0 8 12"><path d="M0 0 L7 6 L0 12 Z" fill="#C5C5C5"/></svg>
<div class="t s" style="left:159.20px;top:673.46px;font-size:16px;line-height:16px;color:#BBBBBB;font-weight:normal;font-style:normal;transform:scaleX(1.0006);transform-origin:0 0;"><u>S</u>ubversion</div>
<svg style="left:509px;top:674px;" width="8" height="12" viewBox="0 0 8 12"><path d="M0 0 L7 6 L0 12 Z" fill="#C5C5C5"/></svg>
<div class="t s" style="left:159.20px;top:700.46px;font-size:16px;line-height:16px;color:#BBBBBB;font-weight:normal;font-style:normal;transform:scaleX(1.0156);transform-origin:0 0;">Synchronize &#x27;chengLayout&#x27;</div>
<div style="left:129px;top:722px;width:399px;height:1px;background:#515151;"></div>
<div class="t s" style="left:159.20px;top:731.46px;font-size:16px;line-height:16px;color:#BBBBBB;font-weight:normal;font-style:normal;transform:scaleX(1.0021);transform-origin:0 0;">Show in Explorer</div>
<div style="left:129px;top:753px;width:399px;height:1px;background:#515151;"></div>
<div class="t s" style="left:159.20px;top:762.46px;font-size:16px;line-height:16px;color:#BBBBBB;font-weight:normal;font-style:normal;transform:scaleX(1.0181);transform-origin:0 0;">Directory <u>P</u>ath</div>
<div class="t s" style="left:419.30px;top:762.46px;font-size:16px;line-height:16px;color:#BBBBBB;font-weight:normal;font-style:normal;transform:scaleX(1.0510);transform-origin:0 0;">Ctrl+Alt+F12</div>
<div style="left:129px;top:784px;width:399px;height:1px;background:#515151;"></div>
<div class="t s" style="left:159.20px;top:793.46px;font-size:16px;line-height:16px;color:#BBBBBB;font-weight:normal;font-style:normal;transform:scaleX(1.0044);transform-origin:0 0;">Compare With...</div>
<div class="t s" style="left:466.10px;top:793.46px;font-size:16px;line-height:16px;color:#BBBBBB;font-weight:normal;font-style:normal;transform:scaleX(1.0397);transform-origin:0 0;">Ctrl+D</div>
<div style="left:129px;top:815px;width:399px;height:1px;background:#515151;"></div>
<div style="left:129px;top:818px;width:399px;height:27px;background:#4B6EAF;"></div>
<div class="t s" style="left:159.20px;top:824.46px;font-size:16px;line-height:16px;color:#BBBBBB;font-weight:normal;font-style:normal;transform:scaleX(1.0365);transform-origin:0 0;">Open Module Settings</div>
<div class="t s" style="left:498.20px;top:824.46px;font-size:16px;line-height:16px;color:#BBBBBB;font-weight:normal;font-style:normal;transform:scaleX(0.8301);transform-origin:0 0;">F4</div>
<div class="t s" style="left:159.20px;top:851.46px;font-size:16px;line-height:16px;color:#BBBBBB;font-weight:normal;font-style:normal;transform:scaleX(1.0580);transform-origin:0 0;">Move Module to Group</div>
<svg style="left:509px;top:852px;" width="8" height="12" viewBox="0 0 8 12"><path d="M0 0 L7 6 L0 12 Z" fill="#C5C5C5"/></svg>
<div class="t s" style="left:159.20px;top:878.46px;font-size:16px;line-height:16px;color:#BBBBBB;font-weight:normal;font-style:normal;transform:scaleX(1.0163);transform-origin:0 0;">Mark Directory as</div>
<svg style="left:509px;top:879px;" width="8" height="12" viewBox="0 0 8 12"><path d="M0 0 L7 6 L0 12 Z" fill="#C5C5C5"/></svg>
<div style="left:129px;top:900px;width:399px;height:1px;background:#515151;"></div>
<div class="t s" style="left:159.20px;top:909.46px;font-size:16px;line-height:16px;color:#BBBBBB;font-weight:normal;font-style:normal;transform:scaleX(1.0323);transform-origin:0 0;">Update Copyright...</div>
<div class="t s" style="left:159.20px;top:936.46px;font-size:16px;line-height:16px;color:#BBBBBB;font-weight:normal;font-style:normal;transform:scaleX(0.9874);transform-origin:0 0;">Diagrams</div>
<svg style="left:509px;top:937px;" width="8" height="12" viewBox="0 0 8 12"><path d="M0 0 L7 6 L0 12 Z" fill="#C5C5C5"/></svg>
<div class="t s" style="left:159.20px;top:963.46px;font-size:16px;line-height:16px;color:#BBBBBB;font-weight:normal;font-style:normal;transform:scaleX(1.0000);transform-origin:0 0;">Create Gist...</div>
<svg style="left:133px;top:160px;" width="20" height="21" viewBox="0 0 20 21"><path d="M4.5 1 L11 13 M15.5 1 L9 13" stroke="#9A9EA1" stroke-width="1.4" fill="none"/><rect x="8.5" y="12" width="3" height="3" fill="#3C3F41" stroke="#9A9EA1" stroke-width="1"/><circle cx="4.5" cy="16.5" r="2.8" fill="none" stroke="#B07ACD" stroke-width="2.2"/><circle cx="15.5" cy="16.5" r="2.8" fill="none" stroke="#B07ACD" stroke-width="2.2"/></svg>
<svg style="left:133px;top:186px;" width="21" height="21" viewBox="0 0 21 21"><path d="M6 1 H13 L18 5 V17 H6 Z" fill="none" stroke="#8A8D8F" stroke-width="1.6"/><path d="M1.5 5 H8.5 L12.5 9 V19.5 H1.5 Z" fill="#3C3F41" stroke="#4A9CD6" stroke-width="1.8"/><path d="M8 5 V9.5 H12.5" fill="none" stroke="#4A9CD6" stroke-width="1.2"/></svg>
<svg style="left:133px;top:266px;" width="21" height="22" viewBox="0 0 21 22"><rect x="6" y="2" width="13" height="15" fill="#D9A050"/><rect x="9" y="0.5" width="6" height="3" fill="#AAAAAA"/><path d="M1.5 8 H8 L11 11 V21 H1.5 Z" fill="#3C3F41" stroke="#8A8D8F" stroke-width="1.8"/></svg>
<svg style="left:134px;top:698px;" width="19" height="19" viewBox="0 0 19 19"><path d="M8.5 1.8 A7.4 7.4 0 0 0 3.6 14.6" stroke="#3D98D3" stroke-width="3.2" fill="none"/><path d="M0.5 17.7 L9 17.7 L9 8.8 Z" fill="#3D98D3"/><path d="M10 16.4 A7.4 7.4 0 0 0 14.9 3.6" stroke="#3D98D3" stroke-width="3.2" fill="none"/><path d="M18 0.5 L9.5 0.5 L9.5 9.4 Z" fill="#3D98D3"/></svg>
<svg style="left:133px;top:790px;" width="20" height="20" viewBox="0 0 20 20"><path d="M8.9 6.1 L13.6 1.1 V5 H19 V7.6 H13.6 V10.9 Z" fill="#0E9BD6"/><path d="M11.2 13.6 L6.4 9 V12.5 H1 V15 H6.4 V18.9 Z" fill="#0E9BD6"/></svg>
<svg style="left:133px;top:934px;" width="20" height="19" viewBox="0 0 20 19"><rect x="1" y="0" width="18" height="3.5" fill="#8A9AA3"/><rect x="1" y="15" width="18" height="3.5" fill="#8A9AA3"/><path d="M6 14 V7 M14 14 V7" stroke="#1E96D0" stroke-width="1.5" fill="none"/><path d="M3 8.5 L6 5 L9 8.5 Z M11 8.5 L14 5 L17 8.5 Z" fill="#1E96D0"/></svg>
<svg style="left:133px;top:958px;" width="20" height="12" viewBox="0 0 20 12"><circle cx="10" cy="10" r="9" fill="none" stroke="#D0D0D0" stroke-width="1.6"/><path d="M5 12 V6 L7 8 H13 L15 6 V12 Z" fill="#D0D0D0"/></svg>
<div style="left:133px;top:815px;width:404px;height:30px;border:3px solid #F53B3B;"></div>
</body></html>
